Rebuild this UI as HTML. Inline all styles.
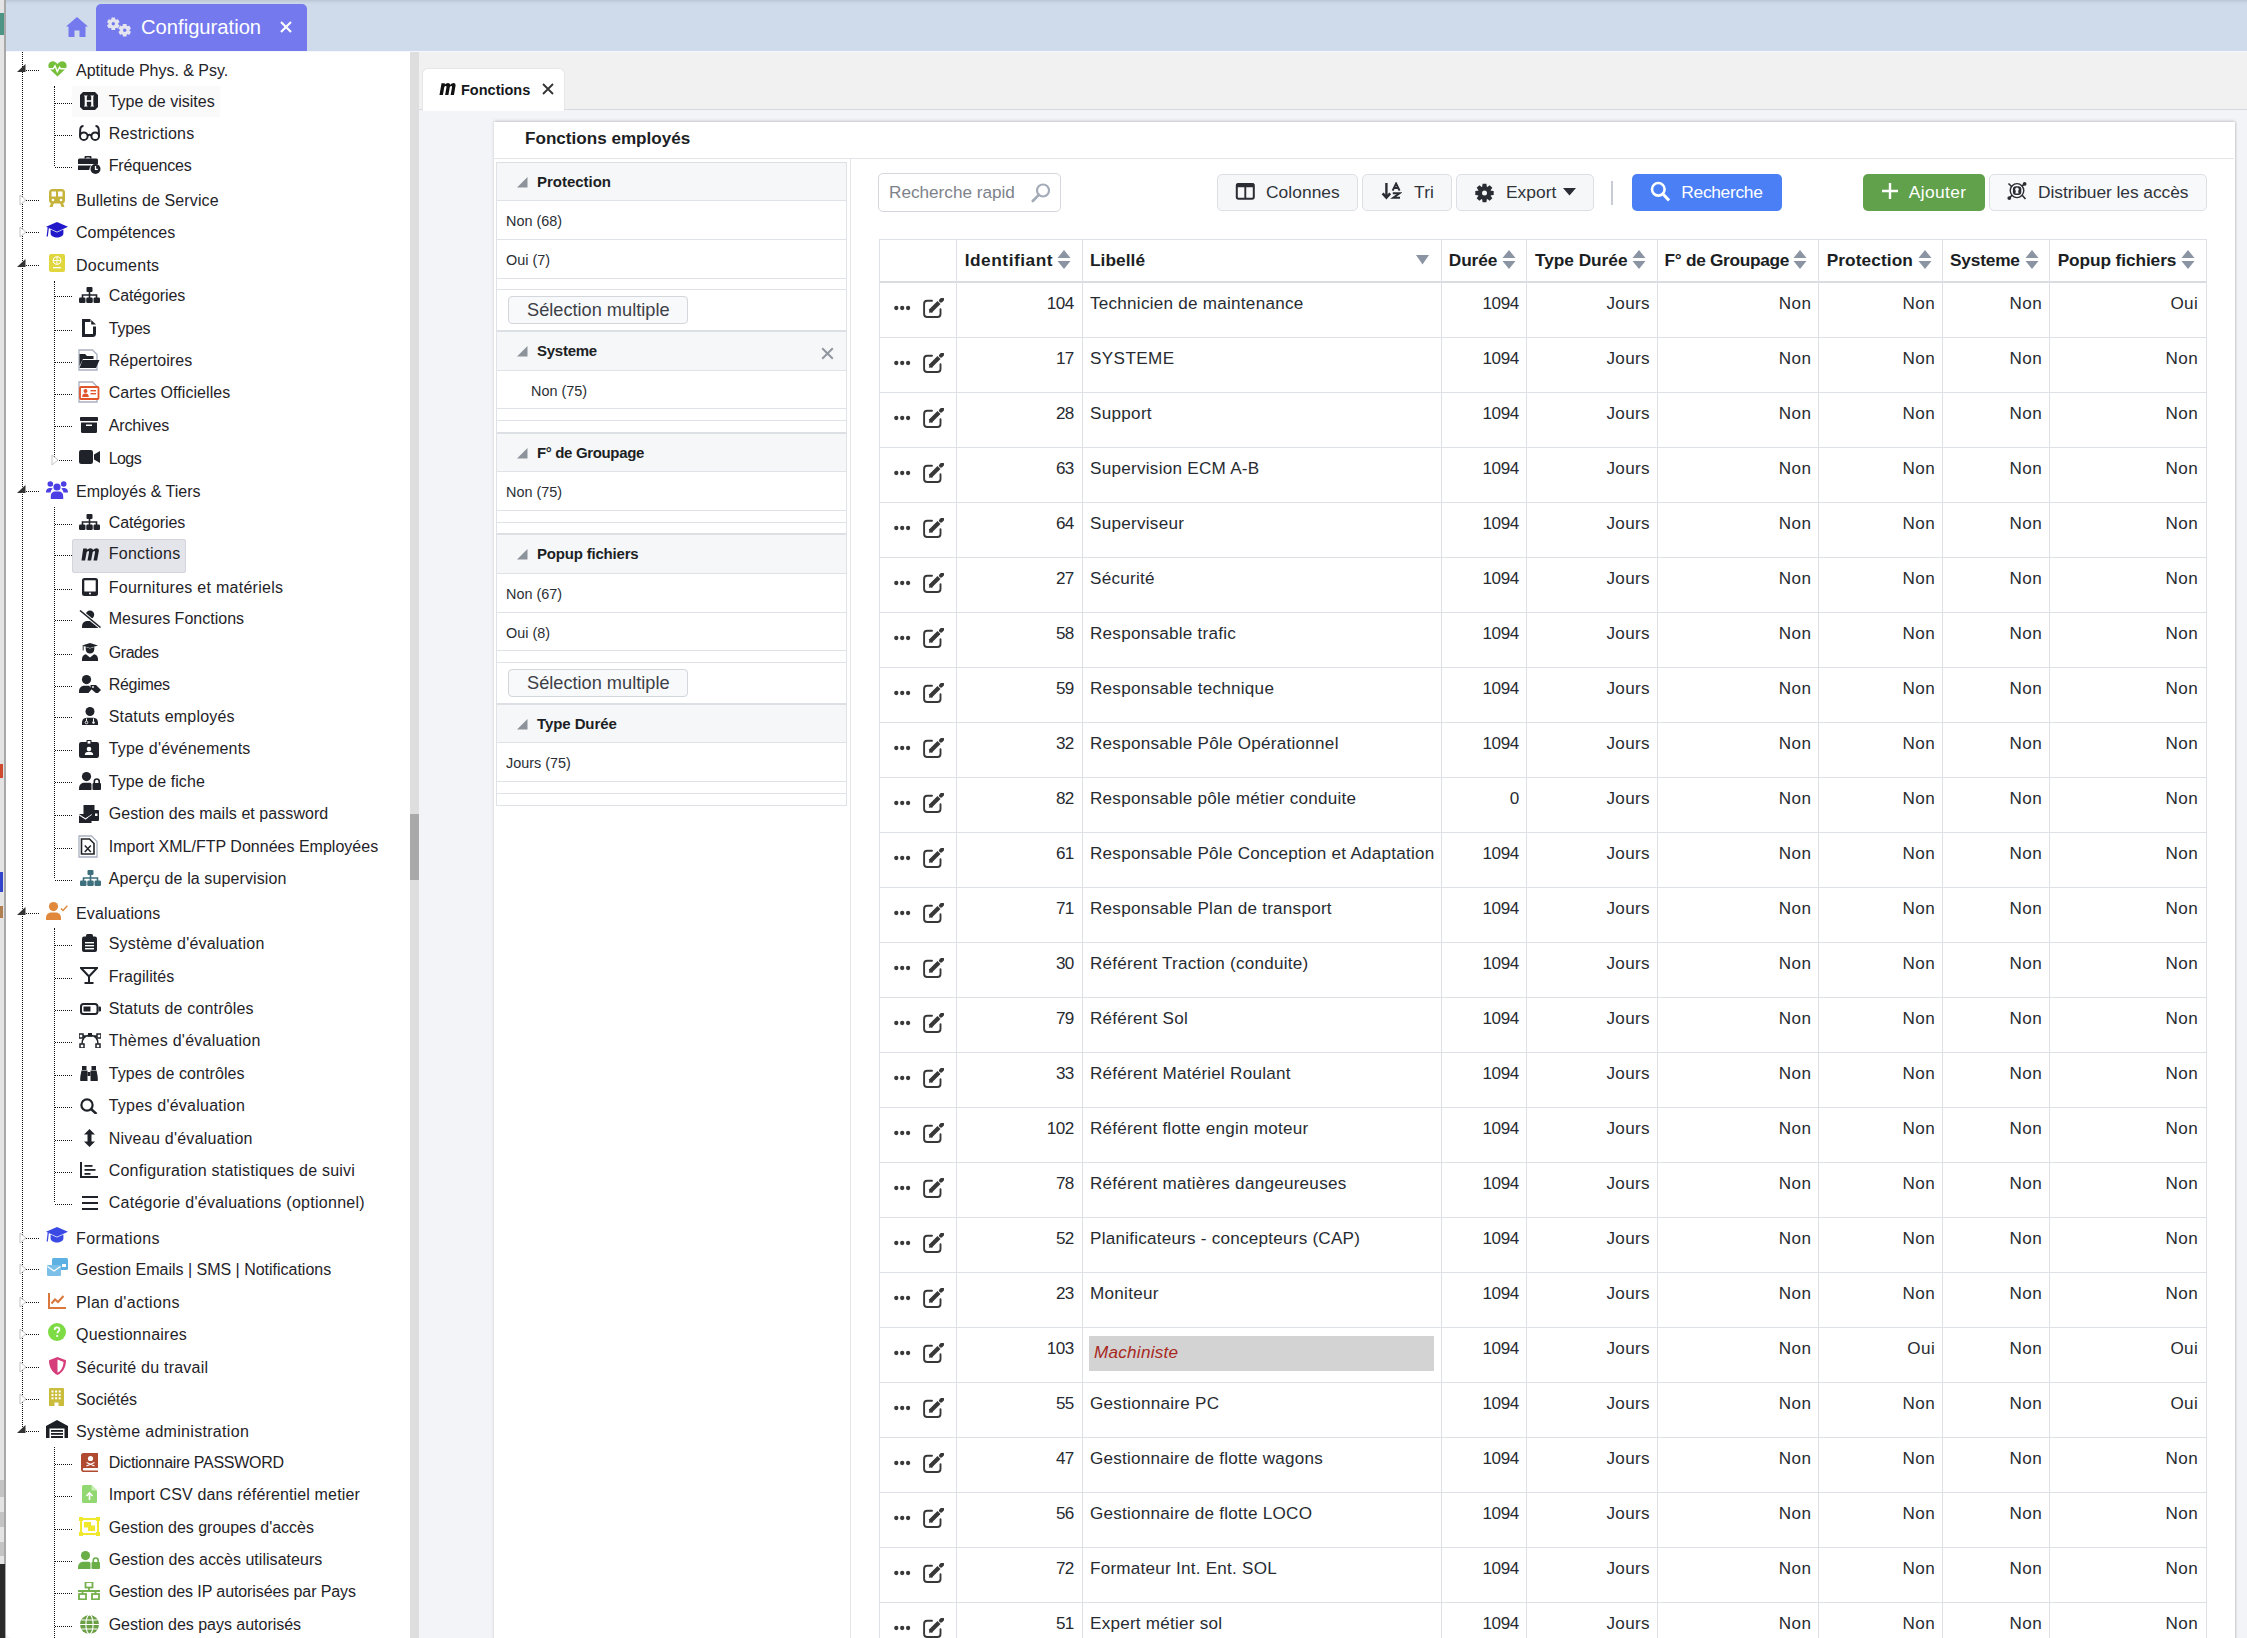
<!DOCTYPE html>
<html><head><meta charset="utf-8"><title>Fonctions</title>
<style>
html,body{margin:0;padding:0;}
body{width:2247px;height:1638px;overflow:hidden;position:relative;background:#f3f4f8;font-family:"Liberation Sans",sans-serif;}
.t{position:absolute;white-space:nowrap;}
.b{position:absolute;}
</style></head><body>
<div class="b" style="left:0px;top:0px;width:4px;height:1638px;background:#e4e4e4;"></div><div class="b" style="left:4px;top:0px;width:2px;height:1638px;background:#a8a8a8;"></div><div class="b" style="left:0px;top:13px;width:4px;height:22px;background:#4e9585;"></div><div class="b" style="left:0px;top:760px;width:4px;height:20px;background:#e0e0e0;"></div><div class="b" style="left:0px;top:1480px;width:4px;height:17px;background:#c4c4c4;"></div><div class="b" style="left:0px;top:1512px;width:4px;height:15px;background:#c4c4c4;"></div><div class="b" style="left:0px;top:1542px;width:4px;height:14px;background:#c4c4c4;"></div><div class="b" style="left:0px;top:1564px;width:5px;height:74px;background:#2a2a2a;"></div><div class="b" style="left:0px;top:764px;width:3px;height:14px;background:#d04a30;"></div><div class="b" style="left:0px;top:872px;width:3px;height:20px;background:#3344cc;"></div><div class="b" style="left:0px;top:906px;width:3px;height:12px;background:#b08050;"></div><div class="b" style="left:6px;top:0px;width:2241px;height:51px;background:linear-gradient(#bcc7d6 0px,#cbd7e6 3px,#cfdbea 5px,#cfdbea 100%);"></div><div class="b" style="left:6px;top:51px;width:2241px;height:1px;background:#f4f7fb;"></div><svg class="b" style="left:66px;top:17px;" width="22" height="20" viewBox="0 0 22 20"><path d="M11 0 L22 9.5 L19.5 9.5 L19.5 20 L13.5 20 L13.5 13.5 L8.5 13.5 L8.5 20 L2.5 20 L2.5 9.5 L0 9.5 Z" fill="#7479ee"/></svg><div class="b" style="left:96px;top:4px;width:211px;height:47px;background:#7479ee;border-radius:5px 5px 0 0;"></div><svg class="b" style="left:104px;top:15px;" width="30" height="26" viewBox="0 0 30 26"><g transform="translate(9.3,8.8)"><rect x="-1.9" y="-6.300000000000001" width="3.8" height="12.600000000000001" rx="0.6" transform="rotate(0)" fill="#e4e4ef"/><rect x="-1.9" y="-6.300000000000001" width="3.8" height="12.600000000000001" rx="0.6" transform="rotate(60)" fill="#e4e4ef"/><rect x="-1.9" y="-6.300000000000001" width="3.8" height="12.600000000000001" rx="0.6" transform="rotate(120)" fill="#e4e4ef"/><circle r="4.9" fill="#e4e4ef"/><circle r="1.7" fill="#7479ee"/></g><g transform="translate(20.7,15.2)"><rect x="-1.9" y="-6.300000000000001" width="3.8" height="12.600000000000001" rx="0.6" transform="rotate(0)" fill="#e4e4ef"/><rect x="-1.9" y="-6.300000000000001" width="3.8" height="12.600000000000001" rx="0.6" transform="rotate(60)" fill="#e4e4ef"/><rect x="-1.9" y="-6.300000000000001" width="3.8" height="12.600000000000001" rx="0.6" transform="rotate(120)" fill="#e4e4ef"/><circle r="4.9" fill="#e4e4ef"/><circle r="1.7" fill="#7479ee"/></g></svg><div class="t" style="top:16.22px;font-size:20.2px;line-height:22.563px;color:#ffffff;left:141px;">Configuration</div><svg class="b" style="left:280px;top:21px;" width="12" height="12" viewBox="0 0 12 12"><path d="M1 1 L11 11 M11 1 L1 11" stroke="#fff" stroke-width="2.2"/></svg><div class="b" style="left:6px;top:52px;width:404px;height:1586px;background:#ffffff;border-bottom-left-radius:6px;"></div><div class="b" style="left:410px;top:52px;width:9px;height:1586px;background:#dedede;"></div><div class="b" style="left:410px;top:814px;width:9px;height:66px;background:#a9a9a9;"></div><div class="b" style="left:419px;top:52px;width:1828px;height:57px;background:#f1f1f1;"></div><div class="b" style="left:419px;top:109px;width:1828px;height:1px;background:#d9dadf;"></div><div class="b" style="left:423px;top:69px;width:141px;height:41px;background:#ffffff;border-radius:5px 5px 0 0;box-shadow:0 0 0 1px #e6e6e8;"></div><div class="b" style="left:423px;top:109px;width:141px;height:2px;background:#ffffff;"></div><svg class="b" style="left:438.5px;top:83px;" width="17" height="12" viewBox="0 0 17 12"><path d="M2.6 0.3 H6.1 L5.9 1.6 Q7.5 0 9.3 0 Q11.2 0 11.6 1.7 Q13.3 0 15 0 Q17.6 0 17 3 L15.4 12 H12 L13.4 4.3 Q13.7 2.9 12.6 2.9 Q11.6 2.9 11.1 4.3 L9.7 12 H6.3 L7.7 4.3 Q8 2.9 6.9 2.9 Q5.9 2.9 5.4 4.3 L4 12 H0.5 Z" fill="#111" transform="scale(0.97,1)"/></svg><div class="t" style="top:81.88px;font-size:14.5px;line-height:16.197px;color:#15181c;font-weight:700;left:461px;">Fonctions</div><svg class="b" style="left:542px;top:83px;" width="12" height="12" viewBox="0 0 12 12"><path d="M1 1 L11 11 M11 1 L1 11" stroke="#333" stroke-width="1.8"/></svg><div class="b" style="left:494px;top:122px;width:1741px;height:1600px;background:#ffffff;box-shadow:0 -1px 3px rgba(0,0,0,0.16), 1px 0 2px rgba(0,0,0,0.10);"></div><div class="t" style="top:128.52px;font-size:17.1px;line-height:19.101px;color:#1b1e23;font-weight:700;left:525px;">Fonctions employés</div><div class="b" style="left:494px;top:158px;width:1740px;height:1px;background:#e3e5e9;"></div><div class="b" style="left:850px;top:159px;width:1px;height:1480px;background:#e3e5e9;"></div><div class="b" style="left:72px;top:538.5px;width:112px;height:32px;background:#e3e5ea;border:1px solid #d2d5db;border-radius:2px;"></div><div class="b" style="left:72px;top:86px;width:148px;height:31px;background:#fafafa;"></div><div class="b" style="left:22px;top:52px;width:0px;height:1379px;border-left:1px dotted #111;"></div><div class="b" style="left:54px;top:86px;width:0px;height:80px;border-left:1px dotted #111;"></div><div class="b" style="left:54px;top:281px;width:0px;height:178px;border-left:1px dotted #111;"></div><div class="b" style="left:54px;top:507px;width:0px;height:371px;border-left:1px dotted #111;"></div><div class="b" style="left:54px;top:928px;width:0px;height:274px;border-left:1px dotted #111;"></div><div class="b" style="left:54px;top:1447px;width:0px;height:191px;border-left:1px dotted #111;"></div><div class="b" style="left:26px;top:70px;width:13px;height:0px;border-top:1px dotted #111;"></div><svg class="b" style="left:17px;top:64px;" width="9" height="8" viewBox="0 0 9 8"><path d="M8.5 0 V8 H0 Z" fill="#333"/></svg><svg class="b" style="left:47.8px;top:60.5px;" width="19" height="16" viewBox="0 0 19 16"><path d="M9.5 15.5 L1.6 7.9 C-0.8 5.4 0.4 0.3 4.6 0.3 C6.9 0.3 8.5 1.7 9.5 3.2 C10.5 1.7 12.1 0.3 14.4 0.3 C18.6 0.3 19.8 5.4 17.4 7.9 Z" fill="#76bf3a"/><path d="M0 7.8 H5.2 L7 4.9 L9.3 10.6 L11.6 6.3 L12.9 7.8 H19" stroke="#fff" stroke-width="1.4" fill="none"/></svg><div class="t" style="top:62.12px;font-size:16px;line-height:17.872px;color:#1f2328;letter-spacing:-0.023px;left:76px;">Aptitude Phys. &amp; Psy.</div><div class="b" style="left:55px;top:103px;width:17px;height:0px;border-top:1px dotted #111;"></div><svg class="b" style="left:80.3px;top:92px;" width="18" height="18" viewBox="0 0 18 18"><path d="M3 0 H15 L18 3 V15 L15 18 H3 L0 15 V3 Z" fill="#1f2329"/><path d="M4 3.5 H7.5 V4.3 H6.8 V8.2 H11.2 V4.3 H10.5 V3.5 H14 V4.3 H13.3 V13.7 H14 V14.5 H10.5 V13.7 H11.2 V9.8 H6.8 V13.7 H7.5 V14.5 H4 V13.7 H4.7 V4.3 H4 Z" fill="#fff"/></svg><div class="t" style="top:93.22px;font-size:16px;line-height:17.872px;color:#1f2328;letter-spacing:0.012px;left:108.7px;">Type de visites</div><div class="b" style="left:55px;top:135px;width:17px;height:0px;border-top:1px dotted #111;"></div><svg class="b" style="left:79px;top:125px;" width="21" height="16" viewBox="0 0 21 16"><circle cx="4.8" cy="11.2" r="3.8" fill="none" stroke="#1f2329" stroke-width="2"/><circle cx="16.2" cy="11.2" r="3.8" fill="none" stroke="#1f2329" stroke-width="2"/><path d="M1 11 L1.2 5 C1.3 2.5 2.5 1 4.5 1 M20 11 L19.8 5 C19.7 2.5 18.5 1 16.5 1 M8.6 10.5 Q10.5 9 12.4 10.5" stroke="#1f2329" stroke-width="2" fill="none"/></svg><div class="t" style="top:124.82px;font-size:16px;line-height:17.872px;color:#1f2328;letter-spacing:0.175px;left:108.7px;">Restrictions</div><div class="b" style="left:55px;top:167px;width:17px;height:0px;border-top:1px dotted #111;"></div><svg class="b" style="left:78px;top:156px;" width="23" height="18" viewBox="0 0 23 18"><path d="M6.5 2.5 V1 Q6.5 0 7.5 0 H12.5 Q13.5 0 13.5 1 V2.5 H11.8 V1.6 H8.2 V2.5 Z" fill="#1f2329"/><path d="M0 4 Q0 2.5 1.5 2.5 H18.5 Q20 2.5 20 4 V8 H0 Z M0 9.5 H13 Q11.5 11 11.2 14 H0 Z" fill="#1f2329"/><circle cx="17.5" cy="13" r="5" fill="#1f2329"/><path d="M17.5 10 V13.3 H19.8" stroke="#fff" stroke-width="1.3" fill="none"/></svg><div class="t" style="top:157.22px;font-size:16px;line-height:17.872px;color:#1f2328;letter-spacing:-0.155px;left:108.7px;">Fréquences</div><div class="b" style="left:26px;top:200px;width:13px;height:0px;border-top:1px dotted #111;"></div><svg class="b" style="left:18.5px;top:194px;" width="8" height="12" viewBox="0 0 8 12"><path d="M1 1 L7 6 L1 11 Z" fill="#fff" stroke="#c4c4c4" stroke-width="1"/></svg><svg class="b" style="left:49px;top:189px;" width="16" height="18" viewBox="0 0 16 18"><rect x="0" y="0" width="16" height="14.5" rx="3.5" fill="#c6b33c"/><rect x="2.5" y="2.5" width="4.5" height="5" fill="#fff"/><rect x="9" y="2.5" width="4.5" height="5" fill="#fff"/><circle cx="4" cy="11" r="1.3" fill="#fff"/><circle cx="12" cy="11" r="1.3" fill="#fff"/><path d="M2 14 L0.5 18 H3.5 L5 14 Z M14 14 L15.5 18 H12.5 L11 14 Z" fill="#c6b33c"/></svg><div class="t" style="top:191.82px;font-size:16px;line-height:17.872px;color:#1f2328;letter-spacing:0.109px;left:76px;">Bulletins de Service</div><div class="b" style="left:26px;top:232px;width:13px;height:0px;border-top:1px dotted #111;"></div><svg class="b" style="left:18.5px;top:226px;" width="8" height="12" viewBox="0 0 8 12"><path d="M1 1 L7 6 L1 11 Z" fill="#fff" stroke="#c4c4c4" stroke-width="1"/></svg><svg class="b" style="left:46px;top:222px;" width="22" height="16" viewBox="0 0 22 16"><path d="M11 0 L22 4.8 L11 9.8 L0 4.8 Z" fill="#2119c9"/><path d="M4.6 7.6 V11.6 C4.6 14 8 15.6 11 15.6 C14 15.6 17.4 14 17.4 11.6 V7.6 L11 10.6 Z" fill="#2119c9"/><path d="M2.3 5.5 L1.2 14.5" stroke="#2119c9" stroke-width="1.3"/></svg><div class="t" style="top:223.92px;font-size:16px;line-height:17.872px;color:#1f2328;letter-spacing:0.058px;left:76px;">Compétences</div><div class="b" style="left:26px;top:265px;width:13px;height:0px;border-top:1px dotted #111;"></div><svg class="b" style="left:17px;top:259px;" width="9" height="8" viewBox="0 0 9 8"><path d="M8.5 0 V8 H0 Z" fill="#333"/></svg><svg class="b" style="left:49px;top:254px;" width="16" height="18" viewBox="0 0 16 18"><rect x="0" y="0" width="16" height="18" rx="2" fill="#e0d63e"/><circle cx="8" cy="6.5" r="3.8" fill="none" stroke="#fff" stroke-width="1.1"/><path d="M4.2 6.5 H11.8 M8 2.7 V10.3" stroke="#fff" stroke-width="0.9"/><rect x="4" y="13" width="8" height="1.3" fill="#fff"/></svg><div class="t" style="top:256.92px;font-size:16px;line-height:17.872px;color:#1f2328;letter-spacing:0.272px;left:76px;">Documents</div><div class="b" style="left:55px;top:296px;width:17px;height:0px;border-top:1px dotted #111;"></div><svg class="b" style="left:79px;top:287px;" width="21" height="16" viewBox="0 0 21 16"><rect x="7.5" y="0" width="6" height="5" rx="1" fill="#1f2329"/><path d="M10.5 5 V8 M3.5 11 V8 H17.5 V11 M10.5 8 V11" stroke="#1f2329" stroke-width="1.6" fill="none"/><rect x="0" y="10.5" width="6.5" height="5.5" rx="1.2" fill="#1f2329"/><rect x="7.25" y="10.5" width="6.5" height="5.5" rx="1.2" fill="#1f2329"/><rect x="14.5" y="10.5" width="6.5" height="5.5" rx="1.2" fill="#1f2329"/></svg><div class="t" style="top:286.62px;font-size:16px;line-height:17.872px;color:#1f2328;letter-spacing:-0.097px;left:108.7px;">Catégories</div><div class="b" style="left:55px;top:330px;width:17px;height:0px;border-top:1px dotted #111;"></div><svg class="b" style="left:82px;top:319px;" width="15" height="18" viewBox="0 0 15 18"><path d="M0 0 H8.5 V3 H3 V15 H10.5 Q11 15 11 14.5 V7.5 H14 V14.5 Q14 18 10.5 18 H0 Z" fill="#1f2329"/><path d="M9.2 1 V5.6 H14 Z" fill="#1f2329"/></svg><div class="t" style="top:319.72px;font-size:16px;line-height:17.872px;color:#1f2328;letter-spacing:-0.197px;left:108.7px;">Types</div><div class="b" style="left:55px;top:362px;width:17px;height:0px;border-top:1px dotted #111;"></div><svg class="b" style="left:78px;top:349px;" width="22" height="22" viewBox="0 0 22 22"><path d="M1 1 H14.5 L19 5.5 V21 H1 Z" fill="#fff" stroke="#aab0c0" stroke-width="1.3"/><path d="M1.5 5 H7 L9 7 H15.5 V10 H5 L1.5 17 Z" fill="#1f2329"/><path d="M4.5 11 H21.5 L18 19 H1.5 Z" fill="#1f2329"/></svg><div class="t" style="top:352.12px;font-size:16px;line-height:17.872px;color:#1f2328;letter-spacing:0.079px;left:108.7px;">Répertoires</div><div class="b" style="left:55px;top:394px;width:17px;height:0px;border-top:1px dotted #111;"></div><svg class="b" style="left:78px;top:381px;" width="22" height="22" viewBox="0 0 22 22"><path d="M1 1 H14.5 L19 5.5 V21 H1 Z" fill="#fff" stroke="#aab0c0" stroke-width="1.3"/><rect x="2" y="6" width="18.5" height="12" rx="1" fill="#fff" stroke="#e0552a" stroke-width="1.8"/><circle cx="7.5" cy="10" r="2" fill="#e0552a"/><path d="M4.2 16 Q4.2 12.6 7.5 12.6 Q10.8 12.6 10.8 16 Z" fill="#e0552a"/><rect x="12.5" y="9" width="5.5" height="1.4" fill="#e0552a"/><rect x="12.5" y="12" width="5.5" height="1.4" fill="#e0552a"/></svg><div class="t" style="top:384.12px;font-size:16px;line-height:17.872px;color:#1f2328;letter-spacing:0.051px;left:108.7px;">Cartes Officielles</div><div class="b" style="left:55px;top:426px;width:17px;height:0px;border-top:1px dotted #111;"></div><svg class="b" style="left:80px;top:417px;" width="18" height="16" viewBox="0 0 18 16"><rect x="0" y="0" width="18" height="4" rx="0.8" fill="#1f2329"/><path d="M1 5.5 H17 V14.5 Q17 16 15.5 16 H2.5 Q1 16 1 14.5 Z" fill="#1f2329"/><rect x="6" y="7.5" width="6" height="1.5" fill="#fff"/></svg><div class="t" style="top:416.62px;font-size:16px;line-height:17.872px;color:#1f2328;letter-spacing:-0.122px;left:108.7px;">Archives</div><div class="b" style="left:55px;top:460px;width:17px;height:0px;border-top:1px dotted #111;"></div><svg class="b" style="left:51px;top:454px;" width="8" height="12" viewBox="0 0 8 12"><path d="M1 1 L7 6 L1 11 Z" fill="#fff" stroke="#c4c4c4" stroke-width="1"/></svg><svg class="b" style="left:79px;top:450px;" width="21" height="14" viewBox="0 0 21 14"><rect x="0" y="0" width="14" height="14" rx="2.2" fill="#1f2329"/><path d="M15 4.5 L21 1 V13 L15 9.5 Z" fill="#1f2329"/></svg><div class="t" style="top:450.22px;font-size:16px;line-height:17.872px;color:#1f2328;letter-spacing:-0.565px;left:108.7px;">Logs</div><div class="b" style="left:26px;top:491px;width:13px;height:0px;border-top:1px dotted #111;"></div><svg class="b" style="left:17px;top:485px;" width="9" height="8" viewBox="0 0 9 8"><path d="M8.5 0 V8 H0 Z" fill="#333"/></svg><svg class="b" style="left:46px;top:480px;" width="22" height="19" viewBox="0 0 22 19"><circle cx="4.3" cy="4" r="2.8" fill="#4a3ee4"/><circle cx="17.7" cy="4" r="2.8" fill="#4a3ee4"/><circle cx="11" cy="7" r="3.6" fill="#4a3ee4"/><path d="M0 12.5 C0 9 2 8 4.3 8 C5.5 8 6.3 8.4 6.8 8.8 C5.3 9.8 4.6 11 4.6 12.5 Z M22 12.5 C22 9 20 8 17.7 8 C16.5 8 15.7 8.4 15.2 8.8 C16.7 9.8 17.4 11 17.4 12.5 Z" fill="#4a3ee4"/><path d="M4.8 19 V16 C4.8 13 6.8 11.5 9 11.5 H13 C15.2 11.5 17.2 13 17.2 16 V19 Z" fill="#4a3ee4"/></svg><div class="t" style="top:483.32px;font-size:16px;line-height:17.872px;color:#1f2328;letter-spacing:0.001px;left:76px;">Employés &amp; Tiers</div><div class="b" style="left:55px;top:524px;width:17px;height:0px;border-top:1px dotted #111;"></div><svg class="b" style="left:79px;top:514px;" width="21" height="16" viewBox="0 0 21 16"><rect x="7.5" y="0" width="6" height="5" rx="1" fill="#1f2329"/><path d="M10.5 5 V8 M3.5 11 V8 H17.5 V11 M10.5 8 V11" stroke="#1f2329" stroke-width="1.6" fill="none"/><rect x="0" y="10.5" width="6.5" height="5.5" rx="1.2" fill="#1f2329"/><rect x="7.25" y="10.5" width="6.5" height="5.5" rx="1.2" fill="#1f2329"/><rect x="14.5" y="10.5" width="6.5" height="5.5" rx="1.2" fill="#1f2329"/></svg><div class="t" style="top:513.92px;font-size:16px;line-height:17.872px;color:#1f2328;letter-spacing:-0.097px;left:108.7px;">Catégories</div><div class="b" style="left:55px;top:555px;width:17px;height:0px;border-top:1px dotted #111;"></div><svg class="b" style="left:80.5px;top:548px;" width="18" height="13" viewBox="0 0 18 13"><path d="M2.2 0.5 H6 L5.8 1.8 Q7.6 0.2 9.6 0.2 Q11.6 0.2 12 2 Q13.8 0.2 15.6 0.2 Q18.4 0.2 17.8 3.3 L16.1 12.5 H12.5 L14 4.5 Q14.3 3 13.2 3 Q12.1 3 11.6 4.5 L10.1 12.5 H6.5 L8 4.5 Q8.3 3 7.2 3 Q6.1 3 5.6 4.5 L4.1 12.5 H0.5 Z" fill="#1f2329"/></svg><div class="t" style="top:545.32px;font-size:16px;line-height:17.872px;color:#1f2328;letter-spacing:0.266px;left:108.7px;">Fonctions</div><div class="b" style="left:55px;top:589px;width:17px;height:0px;border-top:1px dotted #111;"></div><svg class="b" style="left:81.6px;top:578px;" width="16" height="18" viewBox="0 0 16 18"><rect x="0" y="0" width="16" height="18" rx="2.5" fill="#1f2329"/><rect x="2.3" y="2.3" width="11.4" height="11.2" fill="#fff"/><circle cx="8" cy="15.6" r="1" fill="#fff"/></svg><div class="t" style="top:579.42px;font-size:16px;line-height:17.872px;color:#1f2328;letter-spacing:0.271px;left:108.7px;">Fournitures et matériels</div><div class="b" style="left:55px;top:620px;width:17px;height:0px;border-top:1px dotted #111;"></div><svg class="b" style="left:78.6px;top:610px;" width="22" height="18" viewBox="0 0 22 18"><circle cx="11" cy="4.8" r="4.2" fill="#1f2329"/><path d="M3 18 V16.5 C3 12.5 5.8 11 8.5 11 H13.5 C16.2 11 19 12.5 19 16.5 V18 Z" fill="#1f2329"/><path d="M1 0.5 L21.5 17.5" stroke="#fff" stroke-width="3.4"/><path d="M1 0.5 L21.5 17.5" stroke="#1f2329" stroke-width="1.5"/></svg><div class="t" style="top:610.42px;font-size:16px;line-height:17.872px;color:#1f2328;letter-spacing:0.015px;left:108.7px;">Mesures Fonctions</div><div class="b" style="left:55px;top:654px;width:17px;height:0px;border-top:1px dotted #111;"></div><svg class="b" style="left:81.6px;top:642.5px;" width="16" height="18" viewBox="0 0 16 18"><path d="M0 2.5 L8 0 L16 2.5 L8 5 Z" fill="#1f2329"/><path d="M3.7 4 V6 C3.7 9 5.6 10.6 8 10.6 C10.4 10.6 12.3 9 12.3 6 V4 L8 5.5 Z" fill="#1f2329"/><path d="M0 18 V16 C0 13.3 1.6 11.7 4 11.2 L8 14.6 L12 11.2 C14.4 11.7 16 13.3 16 16 V18 Z" fill="#1f2329"/><path d="M1.2 3 V7.5" stroke="#1f2329" stroke-width="0.9"/></svg><div class="t" style="top:643.62px;font-size:16px;line-height:17.872px;color:#1f2328;letter-spacing:-0.414px;left:108.7px;">Grades</div><div class="b" style="left:55px;top:686px;width:17px;height:0px;border-top:1px dotted #111;"></div><svg class="b" style="left:78.6px;top:675px;" width="22" height="18" viewBox="0 0 22 18"><circle cx="7.5" cy="4.6" r="4.6" fill="#1f2329"/><path d="M0 18 V16.5 C0 12.5 2.8 10.8 5.5 10.8 H10 L13 13.8 L9.5 18 Z" fill="#1f2329"/><path d="M11.5 10 H17 L22 15 L18 19 L11.5 13.5 Z" fill="#1f2329"/><circle cx="14" cy="12" r="0.9" fill="#fff"/></svg><div class="t" style="top:675.92px;font-size:16px;line-height:17.872px;color:#1f2328;letter-spacing:-0.289px;left:108.7px;">Régimes</div><div class="b" style="left:55px;top:717px;width:17px;height:0px;border-top:1px dotted #111;"></div><svg class="b" style="left:81.6px;top:707px;" width="16" height="18" viewBox="0 0 16 18"><circle cx="8" cy="4.5" r="4.5" fill="#1f2329"/><path d="M0 18 V16 C0 12.5 2 11 4.5 10.8 H11.5 C14 11 16 12.5 16 16 V18 Z" fill="#1f2329"/><path d="M4.5 11.5 V13.8 M11.5 11.5 V14.5" stroke="#fff" stroke-width="1"/><circle cx="4.5" cy="15.5" r="1.3" fill="none" stroke="#fff" stroke-width="0.9"/><circle cx="11.5" cy="15.5" r="1.2" fill="#fff"/></svg><div class="t" style="top:707.52px;font-size:16px;line-height:17.872px;color:#1f2328;letter-spacing:0.211px;left:108.7px;">Statuts employés</div><div class="b" style="left:55px;top:750px;width:17px;height:0px;border-top:1px dotted #111;"></div><svg class="b" style="left:79.2px;top:740px;" width="20" height="18" viewBox="0 0 20 18"><rect x="0" y="2" width="20" height="16" rx="2.2" fill="#1f2329"/><rect x="7.5" y="0" width="5" height="4.5" rx="0.8" fill="#1f2329"/><rect x="8.6" y="1" width="2.8" height="2.6" fill="#fff"/><circle cx="10" cy="9" r="2.3" fill="#fff"/><path d="M5.8 15 Q5.8 11.8 10 11.8 Q14.2 11.8 14.2 15 Z" fill="#fff"/></svg><div class="t" style="top:740.32px;font-size:16px;line-height:17.872px;color:#1f2328;letter-spacing:0.209px;left:108.7px;">Type d&#x27;événements</div><div class="b" style="left:55px;top:782px;width:17px;height:0px;border-top:1px dotted #111;"></div><svg class="b" style="left:78.6px;top:772px;" width="22" height="18" viewBox="0 0 22 18"><circle cx="7.5" cy="4.6" r="4.6" fill="#1f2329"/><path d="M0 18 V16.5 C0 12.5 2.8 10.8 5.5 10.8 H11 Q12.5 11 12.5 12.5 V18 Z" fill="#1f2329"/><rect x="13.5" y="11" width="8.5" height="7" rx="1" fill="#1f2329"/><path d="M15.3 11.5 V9.5 Q15.3 7 17.75 7 Q20.2 7 20.2 9.5 V11.5" stroke="#1f2329" stroke-width="1.6" fill="none"/></svg><div class="t" style="top:772.62px;font-size:16px;line-height:17.872px;color:#1f2328;letter-spacing:0.077px;left:108.7px;">Type de fiche</div><div class="b" style="left:55px;top:815px;width:17px;height:0px;border-top:1px dotted #111;"></div><svg class="b" style="left:79.2px;top:805px;" width="20" height="18" viewBox="0 0 20 18"><rect x="4.5" y="0" width="11" height="9" fill="#1f2329"/><rect x="9" y="5" width="11" height="11" rx="1" fill="#1f2329"/><rect x="16" y="8.5" width="2.5" height="2.5" fill="#fff"/><path d="M0 10.5 L6.5 14.5 L12.5 10.5 V18 H0 Z" fill="#1f2329"/><path d="M0 9 H12.5 V10 L6.5 13.5 L0 10 Z" fill="#1f2329"/><path d="M0 9.5 L6.5 13.8 L12.8 9.5" stroke="#fff" stroke-width="0.9" fill="none"/></svg><div class="t" style="top:805.42px;font-size:16px;line-height:17.872px;color:#1f2328;letter-spacing:0.061px;left:108.7px;">Gestion des mails et password</div><div class="b" style="left:55px;top:848px;width:17px;height:0px;border-top:1px dotted #111;"></div><svg class="b" style="left:78.2px;top:835px;" width="20" height="23" viewBox="0 0 20 23"><path d="M1 1 H13.5 L19 6.5 V22 H1 Z" fill="#fff" stroke="#aab0c0" stroke-width="1.3"/><path d="M3.5 4 H11.5 L16 8.5 V19 H3.5 Z" fill="none" stroke="#1f2329" stroke-width="1.6"/><path d="M6.8 10.5 L12.8 17 M12.8 10.5 L6.8 17" stroke="#1f2329" stroke-width="1.5"/></svg><div class="t" style="top:837.62px;font-size:16px;line-height:17.872px;color:#1f2328;letter-spacing:0.011px;left:108.7px;">Import XML/FTP Données Employées</div><div class="b" style="left:55px;top:880px;width:17px;height:0px;border-top:1px dotted #111;"></div><svg class="b" style="left:79.5px;top:870px;" width="21" height="16" viewBox="0 0 21 16"><rect x="7.5" y="0" width="6" height="5" rx="1" fill="#3d6f7c"/><path d="M10.5 5 V8 M3.5 11 V8 H17.5 V11 M10.5 8 V11" stroke="#3d6f7c" stroke-width="1.6" fill="none"/><rect x="0" y="10.5" width="6.5" height="5.5" rx="1.2" fill="#3d6f7c"/><rect x="7.25" y="10.5" width="6.5" height="5.5" rx="1.2" fill="#3d6f7c"/><rect x="14.5" y="10.5" width="6.5" height="5.5" rx="1.2" fill="#3d6f7c"/></svg><div class="t" style="top:869.92px;font-size:16px;line-height:17.872px;color:#1f2328;letter-spacing:0.108px;left:108.7px;">Aperçu de la supervision</div><div class="b" style="left:26px;top:913px;width:13px;height:0px;border-top:1px dotted #111;"></div><svg class="b" style="left:17px;top:907px;" width="9" height="8" viewBox="0 0 9 8"><path d="M8.5 0 V8 H0 Z" fill="#333"/></svg><svg class="b" style="left:46px;top:902px;" width="22" height="18" viewBox="0 0 22 18"><circle cx="7.5" cy="4.6" r="4.6" fill="#e0893c"/><path d="M0 18 V16 C0 12 2.8 10.5 5.5 10.5 H9.5 C12.2 10.5 15 12 15 16 V18 Z" fill="#e0893c"/><path d="M15 6.5 L17 8.5 L21.3 3.8" stroke="#e0893c" stroke-width="1.4" fill="none"/></svg><div class="t" style="top:904.82px;font-size:16px;line-height:17.872px;color:#1f2328;letter-spacing:0.148px;left:76px;">Evaluations</div><div class="b" style="left:55px;top:945px;width:17px;height:0px;border-top:1px dotted #111;"></div><svg class="b" style="left:82px;top:934.4px;" width="15" height="18" viewBox="0 0 15 18"><rect x="0" y="2.5" width="15" height="15.5" rx="2" fill="#1f2329"/><rect x="4" y="0" width="7" height="4" rx="1.5" fill="#1f2329"/><rect x="3" y="8" width="9" height="1.4" fill="#fff"/><rect x="3" y="11" width="9" height="1.4" fill="#fff"/><rect x="3" y="14" width="9" height="1.4" fill="#fff"/></svg><div class="t" style="top:934.82px;font-size:16px;line-height:17.872px;color:#1f2328;letter-spacing:0.211px;left:108.7px;">Système d&#x27;évaluation</div><div class="b" style="left:55px;top:978px;width:17px;height:0px;border-top:1px dotted #111;"></div><svg class="b" style="left:80.2px;top:967px;" width="18" height="17" viewBox="0 0 18 17"><path d="M1 1 H17 L9 9.5 Z" fill="none" stroke="#1f2329" stroke-width="2"/><path d="M9 9.5 V16 M4.5 16 H13.5" stroke="#1f2329" stroke-width="2"/></svg><div class="t" style="top:967.92px;font-size:16px;line-height:17.872px;color:#1f2328;letter-spacing:0.077px;left:108.7px;">Fragilités</div><div class="b" style="left:55px;top:1010px;width:17px;height:0px;border-top:1px dotted #111;"></div><svg class="b" style="left:79.5px;top:1002.8px;" width="21" height="12" viewBox="0 0 21 12"><rect x="1" y="1" width="16.5" height="10" rx="2.5" fill="none" stroke="#1f2329" stroke-width="2"/><rect x="3.5" y="3.5" width="7" height="5" fill="#1f2329"/><rect x="18.5" y="3.5" width="2.5" height="5" rx="1" fill="#1f2329"/></svg><div class="t" style="top:999.92px;font-size:16px;line-height:17.872px;color:#1f2328;letter-spacing:0.183px;left:108.7px;">Statuts de contrôles</div><div class="b" style="left:55px;top:1042px;width:17px;height:0px;border-top:1px dotted #111;"></div><svg class="b" style="left:78.6px;top:1032.7px;" width="22" height="15" viewBox="0 0 22 15"><rect x="0" y="1" width="4" height="4" fill="none" stroke="#1f2329" stroke-width="1.5"/><rect x="18" y="1" width="4" height="4" fill="none" stroke="#1f2329" stroke-width="1.5"/><rect x="9" y="0" width="4" height="3.5" fill="#1f2329"/><rect x="1" y="11" width="4" height="4" fill="none" stroke="#1f2329" stroke-width="1.5"/><rect x="17" y="11" width="4" height="4" fill="none" stroke="#1f2329" stroke-width="1.5"/><path d="M4 3 H18 M3 11 Q3 3 11 2 Q19 3 19 11" stroke="#1f2329" stroke-width="1.5" fill="none"/></svg><div class="t" style="top:1032.02px;font-size:16px;line-height:17.872px;color:#1f2328;letter-spacing:0.253px;left:108.7px;">Thèmes d&#x27;évaluation</div><div class="b" style="left:55px;top:1075px;width:17px;height:0px;border-top:1px dotted #111;"></div><svg class="b" style="left:80.2px;top:1065px;" width="18" height="16" viewBox="0 0 18 16"><path d="M2 1 H6.5 V5 H2 Z M11.5 1 H16 V5 H11.5 Z" fill="#1f2329"/><path d="M1.5 5.5 H7.5 V16 H0.3 Q0 14 0.4 11 Z M10.5 5.5 H16.5 L17.6 11 Q18 14 17.7 16 H10.5 Z" fill="#1f2329"/><rect x="7.5" y="7" width="3" height="4" fill="#1f2329"/></svg><div class="t" style="top:1065.02px;font-size:16px;line-height:17.872px;color:#1f2328;letter-spacing:0.094px;left:108.7px;">Types de contrôles</div><div class="b" style="left:55px;top:1107px;width:17px;height:0px;border-top:1px dotted #111;"></div><svg class="b" style="left:80.2px;top:1098px;" width="18" height="16" viewBox="0 0 18 16"><circle cx="7" cy="7" r="5.6" fill="none" stroke="#1f2329" stroke-width="2.2"/><path d="M11 11 L16.5 16" stroke="#1f2329" stroke-width="2.4"/></svg><div class="t" style="top:1097.02px;font-size:16px;line-height:17.872px;color:#1f2328;letter-spacing:0.239px;left:108.7px;">Types d&#x27;évaluation</div><div class="b" style="left:55px;top:1140px;width:17px;height:0px;border-top:1px dotted #111;"></div><svg class="b" style="left:84.2px;top:1129.3px;" width="11" height="18" viewBox="0 0 11 18"><path d="M5.5 0 L11 5.5 H7.5 V12.5 H11 L5.5 18 L0 12.5 H3.5 V5.5 H0 Z" fill="#1f2329"/></svg><div class="t" style="top:1129.82px;font-size:16px;line-height:17.872px;color:#1f2328;letter-spacing:0.258px;left:108.7px;">Niveau d&#x27;évaluation</div><div class="b" style="left:55px;top:1172px;width:17px;height:0px;border-top:1px dotted #111;"></div><svg class="b" style="left:80.2px;top:1162px;" width="18" height="16" viewBox="0 0 18 16"><path d="M1 0 V15 H18" stroke="#1f2329" stroke-width="2" fill="none"/><rect x="4.5" y="3" width="8" height="1.8" fill="#1f2329"/><rect x="4.5" y="7" width="11" height="1.8" fill="#1f2329"/><rect x="4.5" y="11" width="6" height="1.8" fill="#1f2329"/></svg><div class="t" style="top:1161.92px;font-size:16px;line-height:17.872px;color:#1f2328;letter-spacing:0.231px;left:108.7px;">Configuration statistiques de suivi</div><div class="b" style="left:55px;top:1204px;width:17px;height:0px;border-top:1px dotted #111;"></div><svg class="b" style="left:81.6px;top:1195.5px;" width="16" height="14" viewBox="0 0 16 14"><rect x="0" y="0" width="16" height="2" fill="#1f2329"/><rect x="0" y="6" width="16" height="2" fill="#1f2329"/><rect x="0" y="12" width="16" height="2" fill="#1f2329"/></svg><div class="t" style="top:1194.42px;font-size:16px;line-height:17.872px;color:#1f2328;letter-spacing:0.271px;left:108.7px;">Catégorie d&#x27;évaluations (optionnel)</div><div class="b" style="left:26px;top:1238px;width:13px;height:0px;border-top:1px dotted #111;"></div><svg class="b" style="left:18.5px;top:1232px;" width="8" height="12" viewBox="0 0 8 12"><path d="M1 1 L7 6 L1 11 Z" fill="#fff" stroke="#c4c4c4" stroke-width="1"/></svg><svg class="b" style="left:46px;top:1227px;" width="22" height="16" viewBox="0 0 22 16"><path d="M11 0 L22 4.8 L11 9.8 L0 4.8 Z" fill="#3a48e4"/><path d="M4.6 7.6 V11.6 C4.6 14 8 15.6 11 15.6 C14 15.6 17.4 14 17.4 11.6 V7.6 L11 10.6 Z" fill="#3a48e4"/><path d="M2.3 5.5 L1.2 14.5" stroke="#3a48e4" stroke-width="1.3"/></svg><div class="t" style="top:1229.52px;font-size:16px;line-height:17.872px;color:#1f2328;letter-spacing:0.386px;left:76px;">Formations</div><div class="b" style="left:26px;top:1269px;width:13px;height:0px;border-top:1px dotted #111;"></div><svg class="b" style="left:18.5px;top:1263px;" width="8" height="12" viewBox="0 0 8 12"><path d="M1 1 L7 6 L1 11 Z" fill="#fff" stroke="#c4c4c4" stroke-width="1"/></svg><svg class="b" style="left:47px;top:1258px;" width="21" height="18" viewBox="0 0 21 18"><rect x="5" y="0" width="16" height="12" rx="1.5" fill="#5db0e2"/><rect x="15" y="6" width="4" height="3" fill="#fff"/><rect x="0" y="7" width="14" height="11" rx="1.2" fill="#7cc0ea"/><path d="M0.5 8.5 L7 13 L13.5 8.5" stroke="#fff" stroke-width="1.2" fill="none"/></svg><div class="t" style="top:1260.92px;font-size:16px;line-height:17.872px;color:#1f2328;letter-spacing:-0.009px;left:76px;">Gestion Emails | SMS | Notifications</div><div class="b" style="left:26px;top:1302px;width:13px;height:0px;border-top:1px dotted #111;"></div><svg class="b" style="left:18.5px;top:1296px;" width="8" height="12" viewBox="0 0 8 12"><path d="M1 1 L7 6 L1 11 Z" fill="#fff" stroke="#c4c4c4" stroke-width="1"/></svg><svg class="b" style="left:48px;top:1292.7px;" width="18" height="16" viewBox="0 0 18 16"><path d="M1 0 V15 H18" stroke="#d9783a" stroke-width="2" fill="none"/><path d="M3.5 10.5 L7 6.5 L10 9 L15.5 3" stroke="#d9783a" stroke-width="2" fill="none"/></svg><div class="t" style="top:1294.02px;font-size:16px;line-height:17.872px;color:#1f2328;letter-spacing:0.329px;left:76px;">Plan d&#x27;actions</div><div class="b" style="left:26px;top:1334px;width:13px;height:0px;border-top:1px dotted #111;"></div><svg class="b" style="left:18.5px;top:1328px;" width="8" height="12" viewBox="0 0 8 12"><path d="M1 1 L7 6 L1 11 Z" fill="#fff" stroke="#c4c4c4" stroke-width="1"/></svg><svg class="b" style="left:48px;top:1323px;" width="18" height="18" viewBox="0 0 18 18"><circle cx="9" cy="9" r="9" fill="#7ddb44"/><path d="M6.6 7 C6.6 5.2 7.7 4.4 9 4.4 C10.4 4.4 11.4 5.3 11.4 6.6 C11.4 8.2 9.3 8.4 9.3 10.2" stroke="#fff" stroke-width="1.7" fill="none"/><circle cx="9.2" cy="13" r="1.1" fill="#fff"/></svg><div class="t" style="top:1326.02px;font-size:16px;line-height:17.872px;color:#1f2328;letter-spacing:0.245px;left:76px;">Questionnaires</div><div class="b" style="left:26px;top:1367px;width:13px;height:0px;border-top:1px dotted #111;"></div><svg class="b" style="left:18.5px;top:1361px;" width="8" height="12" viewBox="0 0 8 12"><path d="M1 1 L7 6 L1 11 Z" fill="#fff" stroke="#c4c4c4" stroke-width="1"/></svg><svg class="b" style="left:48.5px;top:1356.5px;" width="17" height="18" viewBox="0 0 17 18"><path d="M8.5 0 L17 3.3 C17 10 14 15.5 8.5 18 C3 15.5 0 10 0 3.3 Z" fill="#d63d7a"/><path d="M8.5 2.5 L14.5 4.9 C14.3 9.8 12.3 13.8 8.5 15.6 Z" fill="#fff"/></svg><div class="t" style="top:1359.02px;font-size:16px;line-height:17.872px;color:#1f2328;letter-spacing:0.219px;left:76px;">Sécurité du travail</div><div class="b" style="left:26px;top:1399px;width:13px;height:0px;border-top:1px dotted #111;"></div><svg class="b" style="left:18.5px;top:1393px;" width="8" height="12" viewBox="0 0 8 12"><path d="M1 1 L7 6 L1 11 Z" fill="#fff" stroke="#c4c4c4" stroke-width="1"/></svg><svg class="b" style="left:49px;top:1388px;" width="15" height="18" viewBox="0 0 15 18"><path d="M0 1 Q0 0 1 0 H14 Q15 0 15 1 V18 H9.5 V14.5 H5.5 V18 H0 Z" fill="#cabd3e"/><rect x="2.5" y="2.5" width="2" height="2" fill="#fff"/><rect x="2.5" y="5.9" width="2" height="2" fill="#fff"/><rect x="2.5" y="9.3" width="2" height="2" fill="#fff"/><rect x="6.1" y="2.5" width="2" height="2" fill="#fff"/><rect x="6.1" y="5.9" width="2" height="2" fill="#fff"/><rect x="6.1" y="9.3" width="2" height="2" fill="#fff"/><rect x="9.7" y="2.5" width="2" height="2" fill="#fff"/><rect x="9.7" y="5.9" width="2" height="2" fill="#fff"/><rect x="9.7" y="9.3" width="2" height="2" fill="#fff"/></svg><div class="t" style="top:1391.02px;font-size:16px;line-height:17.872px;color:#1f2328;letter-spacing:-0.053px;left:76px;">Sociétés</div><div class="b" style="left:26px;top:1431px;width:13px;height:0px;border-top:1px dotted #111;"></div><svg class="b" style="left:17px;top:1425px;" width="9" height="8" viewBox="0 0 9 8"><path d="M8.5 0 V8 H0 Z" fill="#333"/></svg><svg class="b" style="left:46px;top:1420px;" width="22" height="18" viewBox="0 0 22 18"><path d="M0 6 L11 0 L22 6 V18 H18.5 V8.5 H3.5 V18 H0 Z" fill="#1c2025"/><rect x="5" y="10" width="12" height="1.8" fill="#1c2025"/><rect x="5" y="13" width="12" height="1.8" fill="#1c2025"/><rect x="5" y="16" width="12" height="2" fill="#1c2025"/></svg><div class="t" style="top:1423.02px;font-size:16px;line-height:17.872px;color:#1f2328;letter-spacing:0.310px;left:76px;">Système administration</div><div class="b" style="left:55px;top:1464px;width:17px;height:0px;border-top:1px dotted #111;"></div><svg class="b" style="left:81px;top:1452.8px;" width="17" height="19" viewBox="0 0 17 19"><path d="M2.5 0 H17 V15 H3 Q1.8 15 1.8 16.2 Q1.8 17.4 3 17.4 H17 V19 H3 Q0 19 0 16.2 V2.5 Q0 0 2.5 0 Z" fill="#b04a31"/><circle cx="9.5" cy="5.5" r="2.6" fill="#fff"/><path d="M5.5 9.5 L13.5 13 M13.5 9.5 L5.5 13" stroke="#fff" stroke-width="1.1"/></svg><div class="t" style="top:1454.02px;font-size:16px;line-height:17.872px;color:#1f2328;letter-spacing:-0.290px;left:108.7px;">Dictionnaire PASSWORD</div><div class="b" style="left:55px;top:1496px;width:17px;height:0px;border-top:1px dotted #111;"></div><svg class="b" style="left:81.7px;top:1485px;" width="15" height="18" viewBox="0 0 15 18"><path d="M1.5 0 H9.5 L15 5.5 V16.5 Q15 18 13.5 18 H1.5 Q0 18 0 16.5 V1.5 Q0 0 1.5 0 Z" fill="#92d872"/><path d="M9.5 0 V5.5 H15" fill="#c6efb2"/><path d="M7.5 8 V15 M4.5 11 L7.5 8 L10.5 11" stroke="#fff" stroke-width="1.6" fill="none"/></svg><div class="t" style="top:1486.22px;font-size:16px;line-height:17.872px;color:#1f2328;letter-spacing:0.145px;left:108.7px;">Import CSV dans référentiel metier</div><div class="b" style="left:55px;top:1529px;width:17px;height:0px;border-top:1px dotted #111;"></div><svg class="b" style="left:78.6px;top:1517px;" width="21" height="19" viewBox="0 0 21 19"><rect x="2" y="2" width="17" height="15" fill="none" stroke="#efe82c" stroke-width="2"/><rect x="0" y="0" width="4" height="4" fill="#efe82c"/><rect x="0" y="15" width="4" height="4" fill="#efe82c"/><rect x="17" y="0" width="4" height="4" fill="#efe82c"/><rect x="17" y="15" width="4" height="4" fill="#efe82c"/><rect x="5" y="5" width="7" height="5.5" fill="#efe82c"/><rect x="9" y="8.5" width="7" height="5.5" fill="#efe82c"/></svg><div class="t" style="top:1518.72px;font-size:16px;line-height:17.872px;color:#1f2328;letter-spacing:-0.025px;left:108.7px;">Gestion des groupes d&#x27;accès</div><div class="b" style="left:55px;top:1561px;width:17px;height:0px;border-top:1px dotted #111;"></div><svg class="b" style="left:78px;top:1550.5px;" width="22" height="18" viewBox="0 0 22 18"><circle cx="7.5" cy="4.6" r="4.6" fill="#6aae48"/><path d="M0 18 V16.5 C0 12.5 2.8 10.8 5.5 10.8 H11 Q12.5 11 12.5 12.5 V18 Z" fill="#6aae48"/><rect x="13.5" y="11" width="8.5" height="7" rx="1" fill="#6aae48"/><path d="M15.3 11.5 V9.5 Q15.3 7 17.75 7 Q20.2 7 20.2 9.5 V11.5" stroke="#6aae48" stroke-width="1.6" fill="none"/></svg><div class="t" style="top:1551.02px;font-size:16px;line-height:17.872px;color:#1f2328;letter-spacing:0.036px;left:108.7px;">Gestion des accès utilisateurs</div><div class="b" style="left:55px;top:1593px;width:17px;height:0px;border-top:1px dotted #111;"></div><svg class="b" style="left:78px;top:1582.4px;" width="22" height="18" viewBox="0 0 22 18"><rect x="7.5" y="0" width="7" height="5.5" fill="none" stroke="#74b04c" stroke-width="1.8"/><path d="M11 5.5 V9 M0 9 H22 M4.5 9 V12 M17.5 9 V12" stroke="#74b04c" stroke-width="1.8"/><rect x="1" y="12" width="7" height="5.3" fill="none" stroke="#74b04c" stroke-width="1.8"/><rect x="14" y="12" width="7" height="5.3" fill="none" stroke="#74b04c" stroke-width="1.8"/></svg><div class="t" style="top:1583.22px;font-size:16px;line-height:17.872px;color:#1f2328;letter-spacing:-0.097px;left:108.7px;">Gestion des IP autorisées par Pays</div><div class="b" style="left:55px;top:1626px;width:17px;height:0px;border-top:1px dotted #111;"></div><svg class="b" style="left:79.5px;top:1615px;" width="19" height="19" viewBox="0 0 19 19"><circle cx="9.5" cy="9.5" r="9.5" fill="#6a9f46"/><ellipse cx="9.5" cy="9.5" rx="3.6" ry="9.5" fill="none" stroke="#fff" stroke-width="1.1"/><path d="M0 9.5 H19 M1.5 5 H17.5 M1.5 14 H17.5" stroke="#fff" stroke-width="1.1"/></svg><div class="t" style="top:1615.72px;font-size:16px;line-height:17.872px;color:#1f2328;letter-spacing:-0.024px;left:108.7px;">Gestion des pays autorisés</div><div class="b" style="left:496px;top:162px;width:351px;height:38px;background:#f6f7f9;"></div><div class="b" style="left:496px;top:162px;width:351px;height:1px;background:#dcdfe3;"></div><div class="b" style="left:496px;top:200px;width:351px;height:1px;background:#dfe2e6;"></div><svg class="b" style="left:517px;top:177px;" width="11" height="11" viewBox="0 0 11 11"><path d="M10.5 0 V10.5 H0 Z" fill="#8d939b"/></svg><div class="t" style="top:173.93px;font-size:15px;line-height:16.755px;color:#1c1f24;font-weight:700;letter-spacing:-0.019px;left:537px;">Protection</div><div class="t" style="top:212.97px;font-size:14.4px;line-height:16.085px;color:#2a2e34;left:506px;">Non (68)</div><div class="b" style="left:496px;top:239px;width:351px;height:1px;background:#dfe2e6;"></div><div class="t" style="top:251.97px;font-size:14.4px;line-height:16.085px;color:#2a2e34;left:506px;">Oui (7)</div><div class="b" style="left:496px;top:278px;width:351px;height:1px;background:#dfe2e6;"></div><div class="b" style="left:496px;top:289px;width:351px;height:1px;background:#dfe2e6;"></div><div class="b" style="left:508px;top:296px;width:180px;height:28px;background:#f8f9fa;border:1px solid #d3d6db;border-radius:4px;box-sizing:border-box;"></div><div class="t" style="top:300.03px;font-size:18.2px;line-height:20.329px;color:#3c4047;left:527px;">Sélection multiple</div><div class="b" style="left:496px;top:331px;width:351px;height:39px;background:#f6f7f9;"></div><div class="b" style="left:496px;top:330px;width:351px;height:2px;background:#dcdfe3;"></div><div class="b" style="left:496px;top:370px;width:351px;height:1px;background:#dfe2e6;"></div><svg class="b" style="left:517px;top:346px;" width="11" height="11" viewBox="0 0 11 11"><path d="M10.5 0 V10.5 H0 Z" fill="#8d939b"/></svg><div class="t" style="top:342.93px;font-size:15px;line-height:16.755px;color:#1c1f24;font-weight:700;letter-spacing:-0.251px;left:537px;">Systeme</div><svg class="b" style="left:821px;top:346.5px;" width="13" height="13" viewBox="0 0 13 13"><path d="M1.2 1.2 L11.8 11.8 M11.8 1.2 L1.2 11.8" stroke="#9197a0" stroke-width="2"/></svg><div class="t" style="top:382.97px;font-size:14.4px;line-height:16.085px;color:#2a2e34;left:531px;">Non (75)</div><div class="b" style="left:496px;top:408px;width:351px;height:1px;background:#dfe2e6;"></div><div class="b" style="left:496px;top:420px;width:351px;height:1px;background:#dfe2e6;"></div><div class="b" style="left:496px;top:432px;width:351px;height:1px;background:#dfe2e6;"></div><div class="b" style="left:496px;top:433px;width:351px;height:38px;background:#f6f7f9;"></div><div class="b" style="left:496px;top:432px;width:351px;height:2px;background:#dcdfe3;"></div><div class="b" style="left:496px;top:471px;width:351px;height:1px;background:#dfe2e6;"></div><svg class="b" style="left:517px;top:448px;" width="11" height="11" viewBox="0 0 11 11"><path d="M10.5 0 V10.5 H0 Z" fill="#8d939b"/></svg><div class="t" style="top:444.93px;font-size:15px;line-height:16.755px;color:#1c1f24;font-weight:700;letter-spacing:-0.349px;left:537px;">F° de Groupage</div><div class="t" style="top:483.97px;font-size:14.4px;line-height:16.085px;color:#2a2e34;left:506px;">Non (75)</div><div class="b" style="left:496px;top:510px;width:351px;height:1px;background:#dfe2e6;"></div><div class="b" style="left:496px;top:522px;width:351px;height:1px;background:#dfe2e6;"></div><div class="b" style="left:496px;top:534px;width:351px;height:39px;background:#f6f7f9;"></div><div class="b" style="left:496px;top:533px;width:351px;height:2px;background:#dcdfe3;"></div><div class="b" style="left:496px;top:573px;width:351px;height:1px;background:#dfe2e6;"></div><svg class="b" style="left:517px;top:549px;" width="11" height="11" viewBox="0 0 11 11"><path d="M10.5 0 V10.5 H0 Z" fill="#8d939b"/></svg><div class="t" style="top:545.92px;font-size:15px;line-height:16.755px;color:#1c1f24;font-weight:700;letter-spacing:-0.191px;left:537px;">Popup fichiers</div><div class="t" style="top:585.97px;font-size:14.4px;line-height:16.085px;color:#2a2e34;left:506px;">Non (67)</div><div class="b" style="left:496px;top:612px;width:351px;height:1px;background:#dfe2e6;"></div><div class="t" style="top:624.97px;font-size:14.4px;line-height:16.085px;color:#2a2e34;left:506px;">Oui (8)</div><div class="b" style="left:496px;top:650px;width:351px;height:1px;background:#dfe2e6;"></div><div class="b" style="left:496px;top:662px;width:351px;height:1px;background:#dfe2e6;"></div><div class="b" style="left:508px;top:669px;width:180px;height:28px;background:#f8f9fa;border:1px solid #d3d6db;border-radius:4px;box-sizing:border-box;"></div><div class="t" style="top:673.03px;font-size:18.2px;line-height:20.329px;color:#3c4047;left:527px;">Sélection multiple</div><div class="b" style="left:496px;top:704px;width:351px;height:38px;background:#f6f7f9;"></div><div class="b" style="left:496px;top:703px;width:351px;height:2px;background:#dcdfe3;"></div><div class="b" style="left:496px;top:742px;width:351px;height:1px;background:#dfe2e6;"></div><svg class="b" style="left:517px;top:719px;" width="11" height="11" viewBox="0 0 11 11"><path d="M10.5 0 V10.5 H0 Z" fill="#8d939b"/></svg><div class="t" style="top:715.92px;font-size:15px;line-height:16.755px;color:#1c1f24;font-weight:700;letter-spacing:-0.087px;left:537px;">Type Durée</div><div class="t" style="top:754.97px;font-size:14.4px;line-height:16.085px;color:#2a2e34;left:506px;">Jours (75)</div><div class="b" style="left:496px;top:781px;width:351px;height:1px;background:#dfe2e6;"></div><div class="b" style="left:496px;top:793px;width:351px;height:1px;background:#dfe2e6;"></div><div class="b" style="left:496px;top:805px;width:351px;height:1px;background:#dfe2e6;"></div><div class="b" style="left:496px;top:162px;width:1px;height:643px;background:#dfe2e6;"></div><div class="b" style="left:846px;top:162px;width:1px;height:643px;background:#dfe2e6;"></div><div class="b" style="left:878px;top:173px;width:183px;height:39px;background:#fff;border:1px solid #d4d7dc;border-radius:5px;box-sizing:border-box;"></div><div class="t" style="top:183.43px;font-size:17.2px;line-height:19.212px;color:#7d828a;letter-spacing:-0.015px;left:889px;">Recherche rapid</div><svg class="b" style="left:1031px;top:182px;" width="20" height="21" viewBox="0 0 20 21"><circle cx="12" cy="8.5" r="6" fill="none" stroke="#a3abb8" stroke-width="2.2"/><path d="M7.8 12.8 L1.8 19" stroke="#a3abb8" stroke-width="2.6" stroke-linecap="round"/></svg><div class="b" style="left:1217px;top:174px;width:141px;height:37px;background:#f6f7f9;border:1px solid #dcdfe4;border-radius:5px;box-sizing:border-box;"></div><div class="t" style="top:183.25px;font-size:17.4px;line-height:19.436px;color:#30343a;letter-spacing:0.040px;left:1266px;">Colonnes</div><svg class="b" style="left:1235px;top:182px;" width="21" height="18" viewBox="0 0 21 18"><rect x="1.8" y="1.9" width="17" height="14.9" rx="1.8" fill="none" stroke="#2a2e34" stroke-width="2"/><rect x="1.5" y="1.2" width="17.6" height="4" rx="1" fill="#2a2e34"/><path d="M10.3 5 V16" stroke="#2a2e34" stroke-width="1.9"/></svg><div class="b" style="left:1362px;top:174px;width:90px;height:37px;background:#f6f7f9;border:1px solid #dcdfe4;border-radius:5px;box-sizing:border-box;"></div><div class="t" style="top:183.25px;font-size:17.4px;line-height:19.436px;color:#30343a;letter-spacing:0.178px;left:1414px;">Tri</div><svg class="b" style="left:1381px;top:182px;" width="21" height="18" viewBox="0 0 21 18"><path d="M5.4 1 V15" stroke="#2a2e34" stroke-width="2.4"/><path d="M1.6 11.4 L5.4 15.6 L9.2 11.4" stroke="#2a2e34" stroke-width="2.6" fill="none"/><path d="M11.6 8.6 L15.1 1.6 L18.6 8.6 M13.2 6 H17" stroke="#2a2e34" stroke-width="2" fill="none"/><path d="M11.8 11.2 H18.6 L12.2 15.8 H19" stroke="#2a2e34" stroke-width="2" fill="none"/></svg><div class="b" style="left:1456px;top:174px;width:138px;height:37px;background:#f6f7f9;border:1px solid #dcdfe4;border-radius:5px;box-sizing:border-box;"></div><div class="t" style="top:183.25px;font-size:17.4px;line-height:19.436px;color:#30343a;letter-spacing:0.022px;left:1506px;">Export</div><svg class="b" style="left:1474px;top:183px;" width="21" height="20" viewBox="0 0 21 20"><path d="M8.6 0.8 H12.4 L13 5 H8 Z" transform="rotate(0 10.5 10)" fill="#2a2e34"/><path d="M8.6 0.8 H12.4 L13 5 H8 Z" transform="rotate(45 10.5 10)" fill="#2a2e34"/><path d="M8.6 0.8 H12.4 L13 5 H8 Z" transform="rotate(90 10.5 10)" fill="#2a2e34"/><path d="M8.6 0.8 H12.4 L13 5 H8 Z" transform="rotate(135 10.5 10)" fill="#2a2e34"/><path d="M8.6 0.8 H12.4 L13 5 H8 Z" transform="rotate(180 10.5 10)" fill="#2a2e34"/><path d="M8.6 0.8 H12.4 L13 5 H8 Z" transform="rotate(225 10.5 10)" fill="#2a2e34"/><path d="M8.6 0.8 H12.4 L13 5 H8 Z" transform="rotate(270 10.5 10)" fill="#2a2e34"/><path d="M8.6 0.8 H12.4 L13 5 H8 Z" transform="rotate(315 10.5 10)" fill="#2a2e34"/><circle cx="10.5" cy="10" r="6.6" fill="#2a2e34"/><circle cx="10.5" cy="10" r="2.5" fill="#f6f7f9"/></svg><svg class="b" style="left:1563px;top:188px;" width="13" height="8" viewBox="0 0 13 8"><path d="M0 0 H13 L6.5 7.5 Z" fill="#2a2e34"/></svg><div class="b" style="left:1611px;top:181px;width:2px;height:24px;background:#c8ccd2;"></div><div class="b" style="left:1632px;top:174px;width:150px;height:37px;background:#4a7ff6;border-radius:5px;"></div><svg class="b" style="left:1650px;top:181px;" width="20" height="21" viewBox="0 0 20 21"><circle cx="8.3" cy="8.3" r="6.3" fill="none" stroke="#fff" stroke-width="2.6"/><path d="M13 13 L19 19.5" stroke="#fff" stroke-width="3"/></svg><div class="t" style="top:183.25px;font-size:17.4px;line-height:19.436px;color:#ffffff;letter-spacing:-0.319px;left:1681.3px;">Recherche</div><div class="b" style="left:1863px;top:174px;width:122px;height:37px;background:#62a14c;border-radius:5px;"></div><svg class="b" style="left:1882px;top:183px;" width="16" height="16" viewBox="0 0 16 16"><path d="M8 0 V16 M0 8 H16" stroke="#fff" stroke-width="2.4"/></svg><div class="t" style="top:183.25px;font-size:17.4px;line-height:19.436px;color:#ffffff;letter-spacing:0.378px;left:1908.7px;">Ajouter</div><div class="b" style="left:1989px;top:174px;width:218px;height:37px;background:#f8f9fa;border:1px solid #dcdfe4;border-radius:5px;box-sizing:border-box;"></div><div class="t" style="top:183.25px;font-size:17.4px;line-height:19.436px;color:#30343a;letter-spacing:-0.064px;left:2038px;">Distribuer les accès</div><svg class="b" style="left:2007px;top:182px;" width="20" height="18" viewBox="0 0 20 18"><ellipse cx="10" cy="8.6" rx="6.8" ry="7" fill="none" stroke="#2a2e34" stroke-width="1.4"/><rect x="5.9" y="4.2" width="8.4" height="8.9" rx="3" fill="#2a2e34"/><circle cx="10" cy="7.4" r="1.8" fill="#f8f9fa"/><path d="M9 8 L8.4 11.6 H11.6 L11 8 Z" fill="#f8f9fa"/><path d="M1.5 1.5 L5 5 M17.5 1.7 L14.8 4.4 M2.2 16.2 L5 13.2 M18.5 17 L15.2 13.2" stroke="#2a2e34" stroke-width="1.6"/><circle cx="17.6" cy="1.9" r="1.9" fill="#2a2e34"/><circle cx="2.3" cy="16.1" r="1.9" fill="#2a2e34"/></svg><div class="b" style="left:879px;top:239px;width:1328px;height:1399px;background:#fff;"></div><div class="b" style="left:879px;top:239px;width:1328px;height:1px;background:#dde0e5;"></div><div class="b" style="left:879px;top:281px;width:1328px;height:2px;background:#d9dde2;"></div><div class="b" style="left:879px;top:239px;width:1px;height:1399px;background:#dde0e5;"></div><div class="b" style="left:956px;top:239px;width:1px;height:1399px;background:#dde0e5;"></div><div class="b" style="left:1082px;top:239px;width:1px;height:1399px;background:#dde0e5;"></div><div class="b" style="left:1441px;top:239px;width:1px;height:1399px;background:#dde0e5;"></div><div class="b" style="left:1526px;top:239px;width:1px;height:1399px;background:#dde0e5;"></div><div class="b" style="left:1657px;top:239px;width:1px;height:1399px;background:#dde0e5;"></div><div class="b" style="left:1818px;top:239px;width:1px;height:1399px;background:#dde0e5;"></div><div class="b" style="left:1942px;top:239px;width:1px;height:1399px;background:#dde0e5;"></div><div class="b" style="left:2049px;top:239px;width:1px;height:1399px;background:#dde0e5;"></div><div class="b" style="left:2206px;top:239px;width:1px;height:1399px;background:#dde0e5;"></div><div class="b" style="left:879px;top:337px;width:1328px;height:1px;background:#dde0e5;"></div><div class="b" style="left:879px;top:392px;width:1328px;height:1px;background:#dde0e5;"></div><div class="b" style="left:879px;top:447px;width:1328px;height:1px;background:#dde0e5;"></div><div class="b" style="left:879px;top:502px;width:1328px;height:1px;background:#dde0e5;"></div><div class="b" style="left:879px;top:557px;width:1328px;height:1px;background:#dde0e5;"></div><div class="b" style="left:879px;top:612px;width:1328px;height:1px;background:#dde0e5;"></div><div class="b" style="left:879px;top:667px;width:1328px;height:1px;background:#dde0e5;"></div><div class="b" style="left:879px;top:722px;width:1328px;height:1px;background:#dde0e5;"></div><div class="b" style="left:879px;top:777px;width:1328px;height:1px;background:#dde0e5;"></div><div class="b" style="left:879px;top:832px;width:1328px;height:1px;background:#dde0e5;"></div><div class="b" style="left:879px;top:887px;width:1328px;height:1px;background:#dde0e5;"></div><div class="b" style="left:879px;top:942px;width:1328px;height:1px;background:#dde0e5;"></div><div class="b" style="left:879px;top:997px;width:1328px;height:1px;background:#dde0e5;"></div><div class="b" style="left:879px;top:1052px;width:1328px;height:1px;background:#dde0e5;"></div><div class="b" style="left:879px;top:1107px;width:1328px;height:1px;background:#dde0e5;"></div><div class="b" style="left:879px;top:1162px;width:1328px;height:1px;background:#dde0e5;"></div><div class="b" style="left:879px;top:1217px;width:1328px;height:1px;background:#dde0e5;"></div><div class="b" style="left:879px;top:1272px;width:1328px;height:1px;background:#dde0e5;"></div><div class="b" style="left:879px;top:1327px;width:1328px;height:1px;background:#dde0e5;"></div><div class="b" style="left:879px;top:1382px;width:1328px;height:1px;background:#dde0e5;"></div><div class="b" style="left:879px;top:1437px;width:1328px;height:1px;background:#dde0e5;"></div><div class="b" style="left:879px;top:1492px;width:1328px;height:1px;background:#dde0e5;"></div><div class="b" style="left:879px;top:1547px;width:1328px;height:1px;background:#dde0e5;"></div><div class="b" style="left:879px;top:1602px;width:1328px;height:1px;background:#dde0e5;"></div><div class="t" style="top:250.84px;font-size:17.3px;line-height:19.324px;color:#1b1e23;font-weight:700;letter-spacing:0.535px;left:964.7px;">Identifiant</div><svg class="b" style="left:1056.5px;top:250px;" width="14" height="20" viewBox="0 0 14 20"><path d="M7 0 L13.5 8 H0.5 Z M0.5 11 H13.5 L7 19 Z" fill="#8b94a3"/></svg><div class="t" style="top:250.84px;font-size:17.3px;line-height:19.324px;color:#1b1e23;font-weight:700;letter-spacing:0.050px;left:1090px;">Libellé</div><div class="t" style="top:250.84px;font-size:17.3px;line-height:19.324px;color:#1b1e23;font-weight:700;letter-spacing:-0.109px;left:1448.8px;">Durée</div><svg class="b" style="left:1501.5px;top:250px;" width="14" height="20" viewBox="0 0 14 20"><path d="M7 0 L13.5 8 H0.5 Z M0.5 11 H13.5 L7 19 Z" fill="#8b94a3"/></svg><div class="t" style="top:250.84px;font-size:17.3px;line-height:19.324px;color:#1b1e23;font-weight:700;letter-spacing:-0.038px;left:1535px;">Type Durée</div><svg class="b" style="left:1632px;top:250px;" width="14" height="20" viewBox="0 0 14 20"><path d="M7 0 L13.5 8 H0.5 Z M0.5 11 H13.5 L7 19 Z" fill="#8b94a3"/></svg><div class="t" style="top:250.84px;font-size:17.3px;line-height:19.324px;color:#1b1e23;font-weight:700;letter-spacing:-0.307px;left:1664.6px;">F° de Groupage</div><svg class="b" style="left:1793px;top:250px;" width="14" height="20" viewBox="0 0 14 20"><path d="M7 0 L13.5 8 H0.5 Z M0.5 11 H13.5 L7 19 Z" fill="#8b94a3"/></svg><div class="t" style="top:250.84px;font-size:17.3px;line-height:19.324px;color:#1b1e23;font-weight:700;letter-spacing:0.083px;left:1826.7px;">Protection</div><svg class="b" style="left:1918px;top:250px;" width="14" height="20" viewBox="0 0 14 20"><path d="M7 0 L13.5 8 H0.5 Z M0.5 11 H13.5 L7 19 Z" fill="#8b94a3"/></svg><div class="t" style="top:250.84px;font-size:17.3px;line-height:19.324px;color:#1b1e23;font-weight:700;letter-spacing:-0.195px;left:1950px;">Systeme</div><svg class="b" style="left:2025px;top:250px;" width="14" height="20" viewBox="0 0 14 20"><path d="M7 0 L13.5 8 H0.5 Z M0.5 11 H13.5 L7 19 Z" fill="#8b94a3"/></svg><div class="t" style="top:250.84px;font-size:17.3px;line-height:19.324px;color:#1b1e23;font-weight:700;letter-spacing:-0.104px;left:2057.7px;">Popup fichiers</div><svg class="b" style="left:2181px;top:250px;" width="14" height="20" viewBox="0 0 14 20"><path d="M7 0 L13.5 8 H0.5 Z M0.5 11 H13.5 L7 19 Z" fill="#8b94a3"/></svg><svg class="b" style="left:1416px;top:255px;" width="13" height="10" viewBox="0 0 13 10"><path d="M0 0 H13 L6.5 9.5 Z" fill="#8b94a3"/></svg><svg class="b" style="left:893px;top:304.8px;" width="18" height="6" viewBox="0 0 18 6"><circle cx="3.3" cy="3" r="2.15" fill="#383838"/><circle cx="9.2" cy="3" r="2.15" fill="#383838"/><circle cx="15.100000000000001" cy="3" r="2.15" fill="#383838"/></svg><svg class="b" style="left:923px;top:298px;" width="21" height="21" viewBox="0 0 21 21"><path d="M9 2.8 H4.2 Q1.1 2.8 1.1 5.9 V15.9 Q1.1 19 4.2 19 H14.4 Q17.5 19 17.5 15.9 V11.2" fill="none" stroke="#383838" stroke-width="1.9" stroke-linecap="round"/><path d="M7.2 13.2 L16 4.4" stroke="#383838" stroke-width="4.2"/><path d="M5.9 14.8 L6.6 10.9 L10.1 14.2 Z" fill="#383838"/><path d="M18 2.6 L19.2 1.4" stroke="#383838" stroke-width="4" stroke-linecap="round"/></svg><div class="t" style="top:293.92px;font-size:17.1px;line-height:19.101px;color:#272b31;letter-spacing:-0.464px;right:1173.16px;text-align:right;">104</div><div class="t" style="top:293.92px;font-size:17.1px;line-height:19.101px;color:#272b31;letter-spacing:0.252px;left:1090px;">Technicien de maintenance</div><div class="t" style="top:293.92px;font-size:17.1px;line-height:19.101px;color:#272b31;letter-spacing:-0.412px;right:728.11px;text-align:right;">1094</div><div class="t" style="top:293.92px;font-size:17.1px;line-height:19.101px;color:#272b31;letter-spacing:0.306px;right:597.19px;text-align:right;">Jours</div><div class="t" style="top:293.92px;font-size:17.1px;line-height:19.101px;color:#272b31;letter-spacing:0.459px;right:435.54px;text-align:right;">Non</div><div class="t" style="top:293.92px;font-size:17.1px;line-height:19.101px;color:#272b31;letter-spacing:0.459px;right:311.84px;text-align:right;">Non</div><div class="t" style="top:293.92px;font-size:17.1px;line-height:19.101px;color:#272b31;letter-spacing:0.459px;right:204.84px;text-align:right;">Non</div><div class="t" style="top:293.92px;font-size:17.1px;line-height:19.101px;color:#272b31;letter-spacing:0.389px;right:48.81px;text-align:right;">Oui</div><svg class="b" style="left:893px;top:359.8px;" width="18" height="6" viewBox="0 0 18 6"><circle cx="3.3" cy="3" r="2.15" fill="#383838"/><circle cx="9.2" cy="3" r="2.15" fill="#383838"/><circle cx="15.100000000000001" cy="3" r="2.15" fill="#383838"/></svg><svg class="b" style="left:923px;top:353px;" width="21" height="21" viewBox="0 0 21 21"><path d="M9 2.8 H4.2 Q1.1 2.8 1.1 5.9 V15.9 Q1.1 19 4.2 19 H14.4 Q17.5 19 17.5 15.9 V11.2" fill="none" stroke="#383838" stroke-width="1.9" stroke-linecap="round"/><path d="M7.2 13.2 L16 4.4" stroke="#383838" stroke-width="4.2"/><path d="M5.9 14.8 L6.6 10.9 L10.1 14.2 Z" fill="#383838"/><path d="M18 2.6 L19.2 1.4" stroke="#383838" stroke-width="4" stroke-linecap="round"/></svg><div class="t" style="top:348.92px;font-size:17.1px;line-height:19.101px;color:#272b31;letter-spacing:-0.618px;right:1173.32px;text-align:right;">17</div><div class="t" style="top:348.92px;font-size:17.1px;line-height:19.101px;color:#272b31;letter-spacing:0.398px;left:1090px;">SYSTEME</div><div class="t" style="top:348.92px;font-size:17.1px;line-height:19.101px;color:#272b31;letter-spacing:-0.412px;right:728.11px;text-align:right;">1094</div><div class="t" style="top:348.92px;font-size:17.1px;line-height:19.101px;color:#272b31;letter-spacing:0.306px;right:597.19px;text-align:right;">Jours</div><div class="t" style="top:348.92px;font-size:17.1px;line-height:19.101px;color:#272b31;letter-spacing:0.459px;right:435.54px;text-align:right;">Non</div><div class="t" style="top:348.92px;font-size:17.1px;line-height:19.101px;color:#272b31;letter-spacing:0.459px;right:311.84px;text-align:right;">Non</div><div class="t" style="top:348.92px;font-size:17.1px;line-height:19.101px;color:#272b31;letter-spacing:0.459px;right:204.84px;text-align:right;">Non</div><div class="t" style="top:348.92px;font-size:17.1px;line-height:19.101px;color:#272b31;letter-spacing:0.459px;right:48.74px;text-align:right;">Non</div><svg class="b" style="left:893px;top:414.8px;" width="18" height="6" viewBox="0 0 18 6"><circle cx="3.3" cy="3" r="2.15" fill="#383838"/><circle cx="9.2" cy="3" r="2.15" fill="#383838"/><circle cx="15.100000000000001" cy="3" r="2.15" fill="#383838"/></svg><svg class="b" style="left:923px;top:408px;" width="21" height="21" viewBox="0 0 21 21"><path d="M9 2.8 H4.2 Q1.1 2.8 1.1 5.9 V15.9 Q1.1 19 4.2 19 H14.4 Q17.5 19 17.5 15.9 V11.2" fill="none" stroke="#383838" stroke-width="1.9" stroke-linecap="round"/><path d="M7.2 13.2 L16 4.4" stroke="#383838" stroke-width="4.2"/><path d="M5.9 14.8 L6.6 10.9 L10.1 14.2 Z" fill="#383838"/><path d="M18 2.6 L19.2 1.4" stroke="#383838" stroke-width="4" stroke-linecap="round"/></svg><div class="t" style="top:403.92px;font-size:17.1px;line-height:19.101px;color:#272b31;letter-spacing:-0.618px;right:1173.32px;text-align:right;">28</div><div class="t" style="top:403.92px;font-size:17.1px;line-height:19.101px;color:#272b31;letter-spacing:0.292px;left:1090px;">Support</div><div class="t" style="top:403.92px;font-size:17.1px;line-height:19.101px;color:#272b31;letter-spacing:-0.412px;right:728.11px;text-align:right;">1094</div><div class="t" style="top:403.92px;font-size:17.1px;line-height:19.101px;color:#272b31;letter-spacing:0.306px;right:597.19px;text-align:right;">Jours</div><div class="t" style="top:403.92px;font-size:17.1px;line-height:19.101px;color:#272b31;letter-spacing:0.459px;right:435.54px;text-align:right;">Non</div><div class="t" style="top:403.92px;font-size:17.1px;line-height:19.101px;color:#272b31;letter-spacing:0.459px;right:311.84px;text-align:right;">Non</div><div class="t" style="top:403.92px;font-size:17.1px;line-height:19.101px;color:#272b31;letter-spacing:0.459px;right:204.84px;text-align:right;">Non</div><div class="t" style="top:403.92px;font-size:17.1px;line-height:19.101px;color:#272b31;letter-spacing:0.459px;right:48.74px;text-align:right;">Non</div><svg class="b" style="left:893px;top:469.8px;" width="18" height="6" viewBox="0 0 18 6"><circle cx="3.3" cy="3" r="2.15" fill="#383838"/><circle cx="9.2" cy="3" r="2.15" fill="#383838"/><circle cx="15.100000000000001" cy="3" r="2.15" fill="#383838"/></svg><svg class="b" style="left:923px;top:463px;" width="21" height="21" viewBox="0 0 21 21"><path d="M9 2.8 H4.2 Q1.1 2.8 1.1 5.9 V15.9 Q1.1 19 4.2 19 H14.4 Q17.5 19 17.5 15.9 V11.2" fill="none" stroke="#383838" stroke-width="1.9" stroke-linecap="round"/><path d="M7.2 13.2 L16 4.4" stroke="#383838" stroke-width="4.2"/><path d="M5.9 14.8 L6.6 10.9 L10.1 14.2 Z" fill="#383838"/><path d="M18 2.6 L19.2 1.4" stroke="#383838" stroke-width="4" stroke-linecap="round"/></svg><div class="t" style="top:458.92px;font-size:17.1px;line-height:19.101px;color:#272b31;letter-spacing:-0.618px;right:1173.32px;text-align:right;">63</div><div class="t" style="top:458.92px;font-size:17.1px;line-height:19.101px;color:#272b31;letter-spacing:0.267px;left:1090px;">Supervision ECM A-B</div><div class="t" style="top:458.92px;font-size:17.1px;line-height:19.101px;color:#272b31;letter-spacing:-0.412px;right:728.11px;text-align:right;">1094</div><div class="t" style="top:458.92px;font-size:17.1px;line-height:19.101px;color:#272b31;letter-spacing:0.306px;right:597.19px;text-align:right;">Jours</div><div class="t" style="top:458.92px;font-size:17.1px;line-height:19.101px;color:#272b31;letter-spacing:0.459px;right:435.54px;text-align:right;">Non</div><div class="t" style="top:458.92px;font-size:17.1px;line-height:19.101px;color:#272b31;letter-spacing:0.459px;right:311.84px;text-align:right;">Non</div><div class="t" style="top:458.92px;font-size:17.1px;line-height:19.101px;color:#272b31;letter-spacing:0.459px;right:204.84px;text-align:right;">Non</div><div class="t" style="top:458.92px;font-size:17.1px;line-height:19.101px;color:#272b31;letter-spacing:0.459px;right:48.74px;text-align:right;">Non</div><svg class="b" style="left:893px;top:524.8px;" width="18" height="6" viewBox="0 0 18 6"><circle cx="3.3" cy="3" r="2.15" fill="#383838"/><circle cx="9.2" cy="3" r="2.15" fill="#383838"/><circle cx="15.100000000000001" cy="3" r="2.15" fill="#383838"/></svg><svg class="b" style="left:923px;top:518px;" width="21" height="21" viewBox="0 0 21 21"><path d="M9 2.8 H4.2 Q1.1 2.8 1.1 5.9 V15.9 Q1.1 19 4.2 19 H14.4 Q17.5 19 17.5 15.9 V11.2" fill="none" stroke="#383838" stroke-width="1.9" stroke-linecap="round"/><path d="M7.2 13.2 L16 4.4" stroke="#383838" stroke-width="4.2"/><path d="M5.9 14.8 L6.6 10.9 L10.1 14.2 Z" fill="#383838"/><path d="M18 2.6 L19.2 1.4" stroke="#383838" stroke-width="4" stroke-linecap="round"/></svg><div class="t" style="top:513.92px;font-size:17.1px;line-height:19.101px;color:#272b31;letter-spacing:-0.618px;right:1173.32px;text-align:right;">64</div><div class="t" style="top:513.92px;font-size:17.1px;line-height:19.101px;color:#272b31;letter-spacing:0.267px;left:1090px;">Superviseur</div><div class="t" style="top:513.92px;font-size:17.1px;line-height:19.101px;color:#272b31;letter-spacing:-0.412px;right:728.11px;text-align:right;">1094</div><div class="t" style="top:513.92px;font-size:17.1px;line-height:19.101px;color:#272b31;letter-spacing:0.306px;right:597.19px;text-align:right;">Jours</div><div class="t" style="top:513.92px;font-size:17.1px;line-height:19.101px;color:#272b31;letter-spacing:0.459px;right:435.54px;text-align:right;">Non</div><div class="t" style="top:513.92px;font-size:17.1px;line-height:19.101px;color:#272b31;letter-spacing:0.459px;right:311.84px;text-align:right;">Non</div><div class="t" style="top:513.92px;font-size:17.1px;line-height:19.101px;color:#272b31;letter-spacing:0.459px;right:204.84px;text-align:right;">Non</div><div class="t" style="top:513.92px;font-size:17.1px;line-height:19.101px;color:#272b31;letter-spacing:0.459px;right:48.74px;text-align:right;">Non</div><svg class="b" style="left:893px;top:579.8px;" width="18" height="6" viewBox="0 0 18 6"><circle cx="3.3" cy="3" r="2.15" fill="#383838"/><circle cx="9.2" cy="3" r="2.15" fill="#383838"/><circle cx="15.100000000000001" cy="3" r="2.15" fill="#383838"/></svg><svg class="b" style="left:923px;top:573px;" width="21" height="21" viewBox="0 0 21 21"><path d="M9 2.8 H4.2 Q1.1 2.8 1.1 5.9 V15.9 Q1.1 19 4.2 19 H14.4 Q17.5 19 17.5 15.9 V11.2" fill="none" stroke="#383838" stroke-width="1.9" stroke-linecap="round"/><path d="M7.2 13.2 L16 4.4" stroke="#383838" stroke-width="4.2"/><path d="M5.9 14.8 L6.6 10.9 L10.1 14.2 Z" fill="#383838"/><path d="M18 2.6 L19.2 1.4" stroke="#383838" stroke-width="4" stroke-linecap="round"/></svg><div class="t" style="top:568.92px;font-size:17.1px;line-height:19.101px;color:#272b31;letter-spacing:-0.618px;right:1173.32px;text-align:right;">27</div><div class="t" style="top:568.92px;font-size:17.1px;line-height:19.101px;color:#272b31;letter-spacing:0.262px;left:1090px;">Sécurité</div><div class="t" style="top:568.92px;font-size:17.1px;line-height:19.101px;color:#272b31;letter-spacing:-0.412px;right:728.11px;text-align:right;">1094</div><div class="t" style="top:568.92px;font-size:17.1px;line-height:19.101px;color:#272b31;letter-spacing:0.306px;right:597.19px;text-align:right;">Jours</div><div class="t" style="top:568.92px;font-size:17.1px;line-height:19.101px;color:#272b31;letter-spacing:0.459px;right:435.54px;text-align:right;">Non</div><div class="t" style="top:568.92px;font-size:17.1px;line-height:19.101px;color:#272b31;letter-spacing:0.459px;right:311.84px;text-align:right;">Non</div><div class="t" style="top:568.92px;font-size:17.1px;line-height:19.101px;color:#272b31;letter-spacing:0.459px;right:204.84px;text-align:right;">Non</div><div class="t" style="top:568.92px;font-size:17.1px;line-height:19.101px;color:#272b31;letter-spacing:0.459px;right:48.74px;text-align:right;">Non</div><svg class="b" style="left:893px;top:634.8px;" width="18" height="6" viewBox="0 0 18 6"><circle cx="3.3" cy="3" r="2.15" fill="#383838"/><circle cx="9.2" cy="3" r="2.15" fill="#383838"/><circle cx="15.100000000000001" cy="3" r="2.15" fill="#383838"/></svg><svg class="b" style="left:923px;top:628px;" width="21" height="21" viewBox="0 0 21 21"><path d="M9 2.8 H4.2 Q1.1 2.8 1.1 5.9 V15.9 Q1.1 19 4.2 19 H14.4 Q17.5 19 17.5 15.9 V11.2" fill="none" stroke="#383838" stroke-width="1.9" stroke-linecap="round"/><path d="M7.2 13.2 L16 4.4" stroke="#383838" stroke-width="4.2"/><path d="M5.9 14.8 L6.6 10.9 L10.1 14.2 Z" fill="#383838"/><path d="M18 2.6 L19.2 1.4" stroke="#383838" stroke-width="4" stroke-linecap="round"/></svg><div class="t" style="top:623.92px;font-size:17.1px;line-height:19.101px;color:#272b31;letter-spacing:-0.618px;right:1173.32px;text-align:right;">58</div><div class="t" style="top:623.92px;font-size:17.1px;line-height:19.101px;color:#272b31;letter-spacing:0.244px;left:1090px;">Responsable trafic</div><div class="t" style="top:623.92px;font-size:17.1px;line-height:19.101px;color:#272b31;letter-spacing:-0.412px;right:728.11px;text-align:right;">1094</div><div class="t" style="top:623.92px;font-size:17.1px;line-height:19.101px;color:#272b31;letter-spacing:0.306px;right:597.19px;text-align:right;">Jours</div><div class="t" style="top:623.92px;font-size:17.1px;line-height:19.101px;color:#272b31;letter-spacing:0.459px;right:435.54px;text-align:right;">Non</div><div class="t" style="top:623.92px;font-size:17.1px;line-height:19.101px;color:#272b31;letter-spacing:0.459px;right:311.84px;text-align:right;">Non</div><div class="t" style="top:623.92px;font-size:17.1px;line-height:19.101px;color:#272b31;letter-spacing:0.459px;right:204.84px;text-align:right;">Non</div><div class="t" style="top:623.92px;font-size:17.1px;line-height:19.101px;color:#272b31;letter-spacing:0.459px;right:48.74px;text-align:right;">Non</div><svg class="b" style="left:893px;top:689.8px;" width="18" height="6" viewBox="0 0 18 6"><circle cx="3.3" cy="3" r="2.15" fill="#383838"/><circle cx="9.2" cy="3" r="2.15" fill="#383838"/><circle cx="15.100000000000001" cy="3" r="2.15" fill="#383838"/></svg><svg class="b" style="left:923px;top:683px;" width="21" height="21" viewBox="0 0 21 21"><path d="M9 2.8 H4.2 Q1.1 2.8 1.1 5.9 V15.9 Q1.1 19 4.2 19 H14.4 Q17.5 19 17.5 15.9 V11.2" fill="none" stroke="#383838" stroke-width="1.9" stroke-linecap="round"/><path d="M7.2 13.2 L16 4.4" stroke="#383838" stroke-width="4.2"/><path d="M5.9 14.8 L6.6 10.9 L10.1 14.2 Z" fill="#383838"/><path d="M18 2.6 L19.2 1.4" stroke="#383838" stroke-width="4" stroke-linecap="round"/></svg><div class="t" style="top:678.92px;font-size:17.1px;line-height:19.101px;color:#272b31;letter-spacing:-0.618px;right:1173.32px;text-align:right;">59</div><div class="t" style="top:678.92px;font-size:17.1px;line-height:19.101px;color:#272b31;letter-spacing:0.261px;left:1090px;">Responsable technique</div><div class="t" style="top:678.92px;font-size:17.1px;line-height:19.101px;color:#272b31;letter-spacing:-0.412px;right:728.11px;text-align:right;">1094</div><div class="t" style="top:678.92px;font-size:17.1px;line-height:19.101px;color:#272b31;letter-spacing:0.306px;right:597.19px;text-align:right;">Jours</div><div class="t" style="top:678.92px;font-size:17.1px;line-height:19.101px;color:#272b31;letter-spacing:0.459px;right:435.54px;text-align:right;">Non</div><div class="t" style="top:678.92px;font-size:17.1px;line-height:19.101px;color:#272b31;letter-spacing:0.459px;right:311.84px;text-align:right;">Non</div><div class="t" style="top:678.92px;font-size:17.1px;line-height:19.101px;color:#272b31;letter-spacing:0.459px;right:204.84px;text-align:right;">Non</div><div class="t" style="top:678.92px;font-size:17.1px;line-height:19.101px;color:#272b31;letter-spacing:0.459px;right:48.74px;text-align:right;">Non</div><svg class="b" style="left:893px;top:744.8px;" width="18" height="6" viewBox="0 0 18 6"><circle cx="3.3" cy="3" r="2.15" fill="#383838"/><circle cx="9.2" cy="3" r="2.15" fill="#383838"/><circle cx="15.100000000000001" cy="3" r="2.15" fill="#383838"/></svg><svg class="b" style="left:923px;top:738px;" width="21" height="21" viewBox="0 0 21 21"><path d="M9 2.8 H4.2 Q1.1 2.8 1.1 5.9 V15.9 Q1.1 19 4.2 19 H14.4 Q17.5 19 17.5 15.9 V11.2" fill="none" stroke="#383838" stroke-width="1.9" stroke-linecap="round"/><path d="M7.2 13.2 L16 4.4" stroke="#383838" stroke-width="4.2"/><path d="M5.9 14.8 L6.6 10.9 L10.1 14.2 Z" fill="#383838"/><path d="M18 2.6 L19.2 1.4" stroke="#383838" stroke-width="4" stroke-linecap="round"/></svg><div class="t" style="top:733.92px;font-size:17.1px;line-height:19.101px;color:#272b31;letter-spacing:-0.618px;right:1173.32px;text-align:right;">32</div><div class="t" style="top:733.92px;font-size:17.1px;line-height:19.101px;color:#272b31;letter-spacing:0.252px;left:1090px;">Responsable Pôle Opérationnel</div><div class="t" style="top:733.92px;font-size:17.1px;line-height:19.101px;color:#272b31;letter-spacing:-0.412px;right:728.11px;text-align:right;">1094</div><div class="t" style="top:733.92px;font-size:17.1px;line-height:19.101px;color:#272b31;letter-spacing:0.306px;right:597.19px;text-align:right;">Jours</div><div class="t" style="top:733.92px;font-size:17.1px;line-height:19.101px;color:#272b31;letter-spacing:0.459px;right:435.54px;text-align:right;">Non</div><div class="t" style="top:733.92px;font-size:17.1px;line-height:19.101px;color:#272b31;letter-spacing:0.459px;right:311.84px;text-align:right;">Non</div><div class="t" style="top:733.92px;font-size:17.1px;line-height:19.101px;color:#272b31;letter-spacing:0.459px;right:204.84px;text-align:right;">Non</div><div class="t" style="top:733.92px;font-size:17.1px;line-height:19.101px;color:#272b31;letter-spacing:0.459px;right:48.74px;text-align:right;">Non</div><svg class="b" style="left:893px;top:799.8px;" width="18" height="6" viewBox="0 0 18 6"><circle cx="3.3" cy="3" r="2.15" fill="#383838"/><circle cx="9.2" cy="3" r="2.15" fill="#383838"/><circle cx="15.100000000000001" cy="3" r="2.15" fill="#383838"/></svg><svg class="b" style="left:923px;top:793px;" width="21" height="21" viewBox="0 0 21 21"><path d="M9 2.8 H4.2 Q1.1 2.8 1.1 5.9 V15.9 Q1.1 19 4.2 19 H14.4 Q17.5 19 17.5 15.9 V11.2" fill="none" stroke="#383838" stroke-width="1.9" stroke-linecap="round"/><path d="M7.2 13.2 L16 4.4" stroke="#383838" stroke-width="4.2"/><path d="M5.9 14.8 L6.6 10.9 L10.1 14.2 Z" fill="#383838"/><path d="M18 2.6 L19.2 1.4" stroke="#383838" stroke-width="4" stroke-linecap="round"/></svg><div class="t" style="top:788.92px;font-size:17.1px;line-height:19.101px;color:#272b31;letter-spacing:-0.618px;right:1173.32px;text-align:right;">82</div><div class="t" style="top:788.92px;font-size:17.1px;line-height:19.101px;color:#272b31;letter-spacing:0.244px;left:1090px;">Responsable pôle métier conduite</div><div class="t" style="top:788.92px;font-size:17.1px;line-height:19.101px;color:#272b31;right:727.70px;text-align:right;">0</div><div class="t" style="top:788.92px;font-size:17.1px;line-height:19.101px;color:#272b31;letter-spacing:0.306px;right:597.19px;text-align:right;">Jours</div><div class="t" style="top:788.92px;font-size:17.1px;line-height:19.101px;color:#272b31;letter-spacing:0.459px;right:435.54px;text-align:right;">Non</div><div class="t" style="top:788.92px;font-size:17.1px;line-height:19.101px;color:#272b31;letter-spacing:0.459px;right:311.84px;text-align:right;">Non</div><div class="t" style="top:788.92px;font-size:17.1px;line-height:19.101px;color:#272b31;letter-spacing:0.459px;right:204.84px;text-align:right;">Non</div><div class="t" style="top:788.92px;font-size:17.1px;line-height:19.101px;color:#272b31;letter-spacing:0.459px;right:48.74px;text-align:right;">Non</div><svg class="b" style="left:893px;top:854.8px;" width="18" height="6" viewBox="0 0 18 6"><circle cx="3.3" cy="3" r="2.15" fill="#383838"/><circle cx="9.2" cy="3" r="2.15" fill="#383838"/><circle cx="15.100000000000001" cy="3" r="2.15" fill="#383838"/></svg><svg class="b" style="left:923px;top:848px;" width="21" height="21" viewBox="0 0 21 21"><path d="M9 2.8 H4.2 Q1.1 2.8 1.1 5.9 V15.9 Q1.1 19 4.2 19 H14.4 Q17.5 19 17.5 15.9 V11.2" fill="none" stroke="#383838" stroke-width="1.9" stroke-linecap="round"/><path d="M7.2 13.2 L16 4.4" stroke="#383838" stroke-width="4.2"/><path d="M5.9 14.8 L6.6 10.9 L10.1 14.2 Z" fill="#383838"/><path d="M18 2.6 L19.2 1.4" stroke="#383838" stroke-width="4" stroke-linecap="round"/></svg><div class="t" style="top:843.92px;font-size:17.1px;line-height:19.101px;color:#272b31;letter-spacing:-0.618px;right:1173.32px;text-align:right;">61</div><div class="t" style="top:843.92px;font-size:17.1px;line-height:19.101px;color:#272b31;letter-spacing:0.245px;left:1090px;">Responsable Pôle Conception et Adaptation</div><div class="t" style="top:843.92px;font-size:17.1px;line-height:19.101px;color:#272b31;letter-spacing:-0.412px;right:728.11px;text-align:right;">1094</div><div class="t" style="top:843.92px;font-size:17.1px;line-height:19.101px;color:#272b31;letter-spacing:0.306px;right:597.19px;text-align:right;">Jours</div><div class="t" style="top:843.92px;font-size:17.1px;line-height:19.101px;color:#272b31;letter-spacing:0.459px;right:435.54px;text-align:right;">Non</div><div class="t" style="top:843.92px;font-size:17.1px;line-height:19.101px;color:#272b31;letter-spacing:0.459px;right:311.84px;text-align:right;">Non</div><div class="t" style="top:843.92px;font-size:17.1px;line-height:19.101px;color:#272b31;letter-spacing:0.459px;right:204.84px;text-align:right;">Non</div><div class="t" style="top:843.92px;font-size:17.1px;line-height:19.101px;color:#272b31;letter-spacing:0.459px;right:48.74px;text-align:right;">Non</div><svg class="b" style="left:893px;top:909.8px;" width="18" height="6" viewBox="0 0 18 6"><circle cx="3.3" cy="3" r="2.15" fill="#383838"/><circle cx="9.2" cy="3" r="2.15" fill="#383838"/><circle cx="15.100000000000001" cy="3" r="2.15" fill="#383838"/></svg><svg class="b" style="left:923px;top:903px;" width="21" height="21" viewBox="0 0 21 21"><path d="M9 2.8 H4.2 Q1.1 2.8 1.1 5.9 V15.9 Q1.1 19 4.2 19 H14.4 Q17.5 19 17.5 15.9 V11.2" fill="none" stroke="#383838" stroke-width="1.9" stroke-linecap="round"/><path d="M7.2 13.2 L16 4.4" stroke="#383838" stroke-width="4.2"/><path d="M5.9 14.8 L6.6 10.9 L10.1 14.2 Z" fill="#383838"/><path d="M18 2.6 L19.2 1.4" stroke="#383838" stroke-width="4" stroke-linecap="round"/></svg><div class="t" style="top:898.92px;font-size:17.1px;line-height:19.101px;color:#272b31;letter-spacing:-0.618px;right:1173.32px;text-align:right;">71</div><div class="t" style="top:898.92px;font-size:17.1px;line-height:19.101px;color:#272b31;letter-spacing:0.245px;left:1090px;">Responsable Plan de transport</div><div class="t" style="top:898.92px;font-size:17.1px;line-height:19.101px;color:#272b31;letter-spacing:-0.412px;right:728.11px;text-align:right;">1094</div><div class="t" style="top:898.92px;font-size:17.1px;line-height:19.101px;color:#272b31;letter-spacing:0.306px;right:597.19px;text-align:right;">Jours</div><div class="t" style="top:898.92px;font-size:17.1px;line-height:19.101px;color:#272b31;letter-spacing:0.459px;right:435.54px;text-align:right;">Non</div><div class="t" style="top:898.92px;font-size:17.1px;line-height:19.101px;color:#272b31;letter-spacing:0.459px;right:311.84px;text-align:right;">Non</div><div class="t" style="top:898.92px;font-size:17.1px;line-height:19.101px;color:#272b31;letter-spacing:0.459px;right:204.84px;text-align:right;">Non</div><div class="t" style="top:898.92px;font-size:17.1px;line-height:19.101px;color:#272b31;letter-spacing:0.459px;right:48.74px;text-align:right;">Non</div><svg class="b" style="left:893px;top:964.8px;" width="18" height="6" viewBox="0 0 18 6"><circle cx="3.3" cy="3" r="2.15" fill="#383838"/><circle cx="9.2" cy="3" r="2.15" fill="#383838"/><circle cx="15.100000000000001" cy="3" r="2.15" fill="#383838"/></svg><svg class="b" style="left:923px;top:958px;" width="21" height="21" viewBox="0 0 21 21"><path d="M9 2.8 H4.2 Q1.1 2.8 1.1 5.9 V15.9 Q1.1 19 4.2 19 H14.4 Q17.5 19 17.5 15.9 V11.2" fill="none" stroke="#383838" stroke-width="1.9" stroke-linecap="round"/><path d="M7.2 13.2 L16 4.4" stroke="#383838" stroke-width="4.2"/><path d="M5.9 14.8 L6.6 10.9 L10.1 14.2 Z" fill="#383838"/><path d="M18 2.6 L19.2 1.4" stroke="#383838" stroke-width="4" stroke-linecap="round"/></svg><div class="t" style="top:953.92px;font-size:17.1px;line-height:19.101px;color:#272b31;letter-spacing:-0.618px;right:1173.32px;text-align:right;">30</div><div class="t" style="top:953.92px;font-size:17.1px;line-height:19.101px;color:#272b31;letter-spacing:0.230px;left:1090px;">Référent Traction (conduite)</div><div class="t" style="top:953.92px;font-size:17.1px;line-height:19.101px;color:#272b31;letter-spacing:-0.412px;right:728.11px;text-align:right;">1094</div><div class="t" style="top:953.92px;font-size:17.1px;line-height:19.101px;color:#272b31;letter-spacing:0.306px;right:597.19px;text-align:right;">Jours</div><div class="t" style="top:953.92px;font-size:17.1px;line-height:19.101px;color:#272b31;letter-spacing:0.459px;right:435.54px;text-align:right;">Non</div><div class="t" style="top:953.92px;font-size:17.1px;line-height:19.101px;color:#272b31;letter-spacing:0.459px;right:311.84px;text-align:right;">Non</div><div class="t" style="top:953.92px;font-size:17.1px;line-height:19.101px;color:#272b31;letter-spacing:0.459px;right:204.84px;text-align:right;">Non</div><div class="t" style="top:953.92px;font-size:17.1px;line-height:19.101px;color:#272b31;letter-spacing:0.459px;right:48.74px;text-align:right;">Non</div><svg class="b" style="left:893px;top:1019.8px;" width="18" height="6" viewBox="0 0 18 6"><circle cx="3.3" cy="3" r="2.15" fill="#383838"/><circle cx="9.2" cy="3" r="2.15" fill="#383838"/><circle cx="15.100000000000001" cy="3" r="2.15" fill="#383838"/></svg><svg class="b" style="left:923px;top:1013px;" width="21" height="21" viewBox="0 0 21 21"><path d="M9 2.8 H4.2 Q1.1 2.8 1.1 5.9 V15.9 Q1.1 19 4.2 19 H14.4 Q17.5 19 17.5 15.9 V11.2" fill="none" stroke="#383838" stroke-width="1.9" stroke-linecap="round"/><path d="M7.2 13.2 L16 4.4" stroke="#383838" stroke-width="4.2"/><path d="M5.9 14.8 L6.6 10.9 L10.1 14.2 Z" fill="#383838"/><path d="M18 2.6 L19.2 1.4" stroke="#383838" stroke-width="4" stroke-linecap="round"/></svg><div class="t" style="top:1008.92px;font-size:17.1px;line-height:19.101px;color:#272b31;letter-spacing:-0.618px;right:1173.32px;text-align:right;">79</div><div class="t" style="top:1008.92px;font-size:17.1px;line-height:19.101px;color:#272b31;letter-spacing:0.253px;left:1090px;">Référent Sol</div><div class="t" style="top:1008.92px;font-size:17.1px;line-height:19.101px;color:#272b31;letter-spacing:-0.412px;right:728.11px;text-align:right;">1094</div><div class="t" style="top:1008.92px;font-size:17.1px;line-height:19.101px;color:#272b31;letter-spacing:0.306px;right:597.19px;text-align:right;">Jours</div><div class="t" style="top:1008.92px;font-size:17.1px;line-height:19.101px;color:#272b31;letter-spacing:0.459px;right:435.54px;text-align:right;">Non</div><div class="t" style="top:1008.92px;font-size:17.1px;line-height:19.101px;color:#272b31;letter-spacing:0.459px;right:311.84px;text-align:right;">Non</div><div class="t" style="top:1008.92px;font-size:17.1px;line-height:19.101px;color:#272b31;letter-spacing:0.459px;right:204.84px;text-align:right;">Non</div><div class="t" style="top:1008.92px;font-size:17.1px;line-height:19.101px;color:#272b31;letter-spacing:0.459px;right:48.74px;text-align:right;">Non</div><svg class="b" style="left:893px;top:1074.8px;" width="18" height="6" viewBox="0 0 18 6"><circle cx="3.3" cy="3" r="2.15" fill="#383838"/><circle cx="9.2" cy="3" r="2.15" fill="#383838"/><circle cx="15.100000000000001" cy="3" r="2.15" fill="#383838"/></svg><svg class="b" style="left:923px;top:1068px;" width="21" height="21" viewBox="0 0 21 21"><path d="M9 2.8 H4.2 Q1.1 2.8 1.1 5.9 V15.9 Q1.1 19 4.2 19 H14.4 Q17.5 19 17.5 15.9 V11.2" fill="none" stroke="#383838" stroke-width="1.9" stroke-linecap="round"/><path d="M7.2 13.2 L16 4.4" stroke="#383838" stroke-width="4.2"/><path d="M5.9 14.8 L6.6 10.9 L10.1 14.2 Z" fill="#383838"/><path d="M18 2.6 L19.2 1.4" stroke="#383838" stroke-width="4" stroke-linecap="round"/></svg><div class="t" style="top:1063.92px;font-size:17.1px;line-height:19.101px;color:#272b31;letter-spacing:-0.618px;right:1173.32px;text-align:right;">33</div><div class="t" style="top:1063.92px;font-size:17.1px;line-height:19.101px;color:#272b31;letter-spacing:0.237px;left:1090px;">Référent Matériel Roulant</div><div class="t" style="top:1063.92px;font-size:17.1px;line-height:19.101px;color:#272b31;letter-spacing:-0.412px;right:728.11px;text-align:right;">1094</div><div class="t" style="top:1063.92px;font-size:17.1px;line-height:19.101px;color:#272b31;letter-spacing:0.306px;right:597.19px;text-align:right;">Jours</div><div class="t" style="top:1063.92px;font-size:17.1px;line-height:19.101px;color:#272b31;letter-spacing:0.459px;right:435.54px;text-align:right;">Non</div><div class="t" style="top:1063.92px;font-size:17.1px;line-height:19.101px;color:#272b31;letter-spacing:0.459px;right:311.84px;text-align:right;">Non</div><div class="t" style="top:1063.92px;font-size:17.1px;line-height:19.101px;color:#272b31;letter-spacing:0.459px;right:204.84px;text-align:right;">Non</div><div class="t" style="top:1063.92px;font-size:17.1px;line-height:19.101px;color:#272b31;letter-spacing:0.459px;right:48.74px;text-align:right;">Non</div><svg class="b" style="left:893px;top:1129.8px;" width="18" height="6" viewBox="0 0 18 6"><circle cx="3.3" cy="3" r="2.15" fill="#383838"/><circle cx="9.2" cy="3" r="2.15" fill="#383838"/><circle cx="15.100000000000001" cy="3" r="2.15" fill="#383838"/></svg><svg class="b" style="left:923px;top:1123px;" width="21" height="21" viewBox="0 0 21 21"><path d="M9 2.8 H4.2 Q1.1 2.8 1.1 5.9 V15.9 Q1.1 19 4.2 19 H14.4 Q17.5 19 17.5 15.9 V11.2" fill="none" stroke="#383838" stroke-width="1.9" stroke-linecap="round"/><path d="M7.2 13.2 L16 4.4" stroke="#383838" stroke-width="4.2"/><path d="M5.9 14.8 L6.6 10.9 L10.1 14.2 Z" fill="#383838"/><path d="M18 2.6 L19.2 1.4" stroke="#383838" stroke-width="4" stroke-linecap="round"/></svg><div class="t" style="top:1118.92px;font-size:17.1px;line-height:19.101px;color:#272b31;letter-spacing:-0.464px;right:1173.16px;text-align:right;">102</div><div class="t" style="top:1118.92px;font-size:17.1px;line-height:19.101px;color:#272b31;letter-spacing:0.230px;left:1090px;">Référent flotte engin moteur</div><div class="t" style="top:1118.92px;font-size:17.1px;line-height:19.101px;color:#272b31;letter-spacing:-0.412px;right:728.11px;text-align:right;">1094</div><div class="t" style="top:1118.92px;font-size:17.1px;line-height:19.101px;color:#272b31;letter-spacing:0.306px;right:597.19px;text-align:right;">Jours</div><div class="t" style="top:1118.92px;font-size:17.1px;line-height:19.101px;color:#272b31;letter-spacing:0.459px;right:435.54px;text-align:right;">Non</div><div class="t" style="top:1118.92px;font-size:17.1px;line-height:19.101px;color:#272b31;letter-spacing:0.459px;right:311.84px;text-align:right;">Non</div><div class="t" style="top:1118.92px;font-size:17.1px;line-height:19.101px;color:#272b31;letter-spacing:0.459px;right:204.84px;text-align:right;">Non</div><div class="t" style="top:1118.92px;font-size:17.1px;line-height:19.101px;color:#272b31;letter-spacing:0.459px;right:48.74px;text-align:right;">Non</div><svg class="b" style="left:893px;top:1184.8px;" width="18" height="6" viewBox="0 0 18 6"><circle cx="3.3" cy="3" r="2.15" fill="#383838"/><circle cx="9.2" cy="3" r="2.15" fill="#383838"/><circle cx="15.100000000000001" cy="3" r="2.15" fill="#383838"/></svg><svg class="b" style="left:923px;top:1178px;" width="21" height="21" viewBox="0 0 21 21"><path d="M9 2.8 H4.2 Q1.1 2.8 1.1 5.9 V15.9 Q1.1 19 4.2 19 H14.4 Q17.5 19 17.5 15.9 V11.2" fill="none" stroke="#383838" stroke-width="1.9" stroke-linecap="round"/><path d="M7.2 13.2 L16 4.4" stroke="#383838" stroke-width="4.2"/><path d="M5.9 14.8 L6.6 10.9 L10.1 14.2 Z" fill="#383838"/><path d="M18 2.6 L19.2 1.4" stroke="#383838" stroke-width="4" stroke-linecap="round"/></svg><div class="t" style="top:1173.92px;font-size:17.1px;line-height:19.101px;color:#272b31;letter-spacing:-0.618px;right:1173.32px;text-align:right;">78</div><div class="t" style="top:1173.92px;font-size:17.1px;line-height:19.101px;color:#272b31;letter-spacing:0.251px;left:1090px;">Référent matières dangeureuses</div><div class="t" style="top:1173.92px;font-size:17.1px;line-height:19.101px;color:#272b31;letter-spacing:-0.412px;right:728.11px;text-align:right;">1094</div><div class="t" style="top:1173.92px;font-size:17.1px;line-height:19.101px;color:#272b31;letter-spacing:0.306px;right:597.19px;text-align:right;">Jours</div><div class="t" style="top:1173.92px;font-size:17.1px;line-height:19.101px;color:#272b31;letter-spacing:0.459px;right:435.54px;text-align:right;">Non</div><div class="t" style="top:1173.92px;font-size:17.1px;line-height:19.101px;color:#272b31;letter-spacing:0.459px;right:311.84px;text-align:right;">Non</div><div class="t" style="top:1173.92px;font-size:17.1px;line-height:19.101px;color:#272b31;letter-spacing:0.459px;right:204.84px;text-align:right;">Non</div><div class="t" style="top:1173.92px;font-size:17.1px;line-height:19.101px;color:#272b31;letter-spacing:0.459px;right:48.74px;text-align:right;">Non</div><svg class="b" style="left:893px;top:1239.8px;" width="18" height="6" viewBox="0 0 18 6"><circle cx="3.3" cy="3" r="2.15" fill="#383838"/><circle cx="9.2" cy="3" r="2.15" fill="#383838"/><circle cx="15.100000000000001" cy="3" r="2.15" fill="#383838"/></svg><svg class="b" style="left:923px;top:1233px;" width="21" height="21" viewBox="0 0 21 21"><path d="M9 2.8 H4.2 Q1.1 2.8 1.1 5.9 V15.9 Q1.1 19 4.2 19 H14.4 Q17.5 19 17.5 15.9 V11.2" fill="none" stroke="#383838" stroke-width="1.9" stroke-linecap="round"/><path d="M7.2 13.2 L16 4.4" stroke="#383838" stroke-width="4.2"/><path d="M5.9 14.8 L6.6 10.9 L10.1 14.2 Z" fill="#383838"/><path d="M18 2.6 L19.2 1.4" stroke="#383838" stroke-width="4" stroke-linecap="round"/></svg><div class="t" style="top:1228.92px;font-size:17.1px;line-height:19.101px;color:#272b31;letter-spacing:-0.618px;right:1173.32px;text-align:right;">52</div><div class="t" style="top:1228.92px;font-size:17.1px;line-height:19.101px;color:#272b31;letter-spacing:0.232px;left:1090px;">Planificateurs - concepteurs (CAP)</div><div class="t" style="top:1228.92px;font-size:17.1px;line-height:19.101px;color:#272b31;letter-spacing:-0.412px;right:728.11px;text-align:right;">1094</div><div class="t" style="top:1228.92px;font-size:17.1px;line-height:19.101px;color:#272b31;letter-spacing:0.306px;right:597.19px;text-align:right;">Jours</div><div class="t" style="top:1228.92px;font-size:17.1px;line-height:19.101px;color:#272b31;letter-spacing:0.459px;right:435.54px;text-align:right;">Non</div><div class="t" style="top:1228.92px;font-size:17.1px;line-height:19.101px;color:#272b31;letter-spacing:0.459px;right:311.84px;text-align:right;">Non</div><div class="t" style="top:1228.92px;font-size:17.1px;line-height:19.101px;color:#272b31;letter-spacing:0.459px;right:204.84px;text-align:right;">Non</div><div class="t" style="top:1228.92px;font-size:17.1px;line-height:19.101px;color:#272b31;letter-spacing:0.459px;right:48.74px;text-align:right;">Non</div><svg class="b" style="left:893px;top:1294.8px;" width="18" height="6" viewBox="0 0 18 6"><circle cx="3.3" cy="3" r="2.15" fill="#383838"/><circle cx="9.2" cy="3" r="2.15" fill="#383838"/><circle cx="15.100000000000001" cy="3" r="2.15" fill="#383838"/></svg><svg class="b" style="left:923px;top:1288px;" width="21" height="21" viewBox="0 0 21 21"><path d="M9 2.8 H4.2 Q1.1 2.8 1.1 5.9 V15.9 Q1.1 19 4.2 19 H14.4 Q17.5 19 17.5 15.9 V11.2" fill="none" stroke="#383838" stroke-width="1.9" stroke-linecap="round"/><path d="M7.2 13.2 L16 4.4" stroke="#383838" stroke-width="4.2"/><path d="M5.9 14.8 L6.6 10.9 L10.1 14.2 Z" fill="#383838"/><path d="M18 2.6 L19.2 1.4" stroke="#383838" stroke-width="4" stroke-linecap="round"/></svg><div class="t" style="top:1283.92px;font-size:17.1px;line-height:19.101px;color:#272b31;letter-spacing:-0.618px;right:1173.32px;text-align:right;">23</div><div class="t" style="top:1283.92px;font-size:17.1px;line-height:19.101px;color:#272b31;letter-spacing:0.278px;left:1090px;">Moniteur</div><div class="t" style="top:1283.92px;font-size:17.1px;line-height:19.101px;color:#272b31;letter-spacing:-0.412px;right:728.11px;text-align:right;">1094</div><div class="t" style="top:1283.92px;font-size:17.1px;line-height:19.101px;color:#272b31;letter-spacing:0.306px;right:597.19px;text-align:right;">Jours</div><div class="t" style="top:1283.92px;font-size:17.1px;line-height:19.101px;color:#272b31;letter-spacing:0.459px;right:435.54px;text-align:right;">Non</div><div class="t" style="top:1283.92px;font-size:17.1px;line-height:19.101px;color:#272b31;letter-spacing:0.459px;right:311.84px;text-align:right;">Non</div><div class="t" style="top:1283.92px;font-size:17.1px;line-height:19.101px;color:#272b31;letter-spacing:0.459px;right:204.84px;text-align:right;">Non</div><div class="t" style="top:1283.92px;font-size:17.1px;line-height:19.101px;color:#272b31;letter-spacing:0.459px;right:48.74px;text-align:right;">Non</div><svg class="b" style="left:893px;top:1349.8px;" width="18" height="6" viewBox="0 0 18 6"><circle cx="3.3" cy="3" r="2.15" fill="#383838"/><circle cx="9.2" cy="3" r="2.15" fill="#383838"/><circle cx="15.100000000000001" cy="3" r="2.15" fill="#383838"/></svg><svg class="b" style="left:923px;top:1343px;" width="21" height="21" viewBox="0 0 21 21"><path d="M9 2.8 H4.2 Q1.1 2.8 1.1 5.9 V15.9 Q1.1 19 4.2 19 H14.4 Q17.5 19 17.5 15.9 V11.2" fill="none" stroke="#383838" stroke-width="1.9" stroke-linecap="round"/><path d="M7.2 13.2 L16 4.4" stroke="#383838" stroke-width="4.2"/><path d="M5.9 14.8 L6.6 10.9 L10.1 14.2 Z" fill="#383838"/><path d="M18 2.6 L19.2 1.4" stroke="#383838" stroke-width="4" stroke-linecap="round"/></svg><div class="t" style="top:1338.92px;font-size:17.1px;line-height:19.101px;color:#272b31;letter-spacing:-0.464px;right:1173.16px;text-align:right;">103</div><div class="b" style="left:1089px;top:1336px;width:345px;height:35px;background:#d3d3d3;"></div><div class="t" style="top:1342.92px;font-size:17.1px;line-height:19.101px;color:#a8281c;font-style:italic;letter-spacing:0.266px;left:1094px;">Machiniste</div><div class="t" style="top:1338.92px;font-size:17.1px;line-height:19.101px;color:#272b31;letter-spacing:-0.412px;right:728.11px;text-align:right;">1094</div><div class="t" style="top:1338.92px;font-size:17.1px;line-height:19.101px;color:#272b31;letter-spacing:0.306px;right:597.19px;text-align:right;">Jours</div><div class="t" style="top:1338.92px;font-size:17.1px;line-height:19.101px;color:#272b31;letter-spacing:0.459px;right:435.54px;text-align:right;">Non</div><div class="t" style="top:1338.92px;font-size:17.1px;line-height:19.101px;color:#272b31;letter-spacing:0.389px;right:311.91px;text-align:right;">Oui</div><div class="t" style="top:1338.92px;font-size:17.1px;line-height:19.101px;color:#272b31;letter-spacing:0.459px;right:204.84px;text-align:right;">Non</div><div class="t" style="top:1338.92px;font-size:17.1px;line-height:19.101px;color:#272b31;letter-spacing:0.389px;right:48.81px;text-align:right;">Oui</div><svg class="b" style="left:893px;top:1404.8px;" width="18" height="6" viewBox="0 0 18 6"><circle cx="3.3" cy="3" r="2.15" fill="#383838"/><circle cx="9.2" cy="3" r="2.15" fill="#383838"/><circle cx="15.100000000000001" cy="3" r="2.15" fill="#383838"/></svg><svg class="b" style="left:923px;top:1398px;" width="21" height="21" viewBox="0 0 21 21"><path d="M9 2.8 H4.2 Q1.1 2.8 1.1 5.9 V15.9 Q1.1 19 4.2 19 H14.4 Q17.5 19 17.5 15.9 V11.2" fill="none" stroke="#383838" stroke-width="1.9" stroke-linecap="round"/><path d="M7.2 13.2 L16 4.4" stroke="#383838" stroke-width="4.2"/><path d="M5.9 14.8 L6.6 10.9 L10.1 14.2 Z" fill="#383838"/><path d="M18 2.6 L19.2 1.4" stroke="#383838" stroke-width="4" stroke-linecap="round"/></svg><div class="t" style="top:1393.92px;font-size:17.1px;line-height:19.101px;color:#272b31;letter-spacing:-0.618px;right:1173.32px;text-align:right;">55</div><div class="t" style="top:1393.92px;font-size:17.1px;line-height:19.101px;color:#272b31;letter-spacing:0.262px;left:1090px;">Gestionnaire PC</div><div class="t" style="top:1393.92px;font-size:17.1px;line-height:19.101px;color:#272b31;letter-spacing:-0.412px;right:728.11px;text-align:right;">1094</div><div class="t" style="top:1393.92px;font-size:17.1px;line-height:19.101px;color:#272b31;letter-spacing:0.306px;right:597.19px;text-align:right;">Jours</div><div class="t" style="top:1393.92px;font-size:17.1px;line-height:19.101px;color:#272b31;letter-spacing:0.459px;right:435.54px;text-align:right;">Non</div><div class="t" style="top:1393.92px;font-size:17.1px;line-height:19.101px;color:#272b31;letter-spacing:0.459px;right:311.84px;text-align:right;">Non</div><div class="t" style="top:1393.92px;font-size:17.1px;line-height:19.101px;color:#272b31;letter-spacing:0.459px;right:204.84px;text-align:right;">Non</div><div class="t" style="top:1393.92px;font-size:17.1px;line-height:19.101px;color:#272b31;letter-spacing:0.389px;right:48.81px;text-align:right;">Oui</div><svg class="b" style="left:893px;top:1459.8px;" width="18" height="6" viewBox="0 0 18 6"><circle cx="3.3" cy="3" r="2.15" fill="#383838"/><circle cx="9.2" cy="3" r="2.15" fill="#383838"/><circle cx="15.100000000000001" cy="3" r="2.15" fill="#383838"/></svg><svg class="b" style="left:923px;top:1453px;" width="21" height="21" viewBox="0 0 21 21"><path d="M9 2.8 H4.2 Q1.1 2.8 1.1 5.9 V15.9 Q1.1 19 4.2 19 H14.4 Q17.5 19 17.5 15.9 V11.2" fill="none" stroke="#383838" stroke-width="1.9" stroke-linecap="round"/><path d="M7.2 13.2 L16 4.4" stroke="#383838" stroke-width="4.2"/><path d="M5.9 14.8 L6.6 10.9 L10.1 14.2 Z" fill="#383838"/><path d="M18 2.6 L19.2 1.4" stroke="#383838" stroke-width="4" stroke-linecap="round"/></svg><div class="t" style="top:1448.92px;font-size:17.1px;line-height:19.101px;color:#272b31;letter-spacing:-0.618px;right:1173.32px;text-align:right;">47</div><div class="t" style="top:1448.92px;font-size:17.1px;line-height:19.101px;color:#272b31;letter-spacing:0.236px;left:1090px;">Gestionnaire de flotte wagons</div><div class="t" style="top:1448.92px;font-size:17.1px;line-height:19.101px;color:#272b31;letter-spacing:-0.412px;right:728.11px;text-align:right;">1094</div><div class="t" style="top:1448.92px;font-size:17.1px;line-height:19.101px;color:#272b31;letter-spacing:0.306px;right:597.19px;text-align:right;">Jours</div><div class="t" style="top:1448.92px;font-size:17.1px;line-height:19.101px;color:#272b31;letter-spacing:0.459px;right:435.54px;text-align:right;">Non</div><div class="t" style="top:1448.92px;font-size:17.1px;line-height:19.101px;color:#272b31;letter-spacing:0.459px;right:311.84px;text-align:right;">Non</div><div class="t" style="top:1448.92px;font-size:17.1px;line-height:19.101px;color:#272b31;letter-spacing:0.459px;right:204.84px;text-align:right;">Non</div><div class="t" style="top:1448.92px;font-size:17.1px;line-height:19.101px;color:#272b31;letter-spacing:0.459px;right:48.74px;text-align:right;">Non</div><svg class="b" style="left:893px;top:1514.8px;" width="18" height="6" viewBox="0 0 18 6"><circle cx="3.3" cy="3" r="2.15" fill="#383838"/><circle cx="9.2" cy="3" r="2.15" fill="#383838"/><circle cx="15.100000000000001" cy="3" r="2.15" fill="#383838"/></svg><svg class="b" style="left:923px;top:1508px;" width="21" height="21" viewBox="0 0 21 21"><path d="M9 2.8 H4.2 Q1.1 2.8 1.1 5.9 V15.9 Q1.1 19 4.2 19 H14.4 Q17.5 19 17.5 15.9 V11.2" fill="none" stroke="#383838" stroke-width="1.9" stroke-linecap="round"/><path d="M7.2 13.2 L16 4.4" stroke="#383838" stroke-width="4.2"/><path d="M5.9 14.8 L6.6 10.9 L10.1 14.2 Z" fill="#383838"/><path d="M18 2.6 L19.2 1.4" stroke="#383838" stroke-width="4" stroke-linecap="round"/></svg><div class="t" style="top:1503.92px;font-size:17.1px;line-height:19.101px;color:#272b31;letter-spacing:-0.618px;right:1173.32px;text-align:right;">56</div><div class="t" style="top:1503.92px;font-size:17.1px;line-height:19.101px;color:#272b31;letter-spacing:0.243px;left:1090px;">Gestionnaire de flotte LOCO</div><div class="t" style="top:1503.92px;font-size:17.1px;line-height:19.101px;color:#272b31;letter-spacing:-0.412px;right:728.11px;text-align:right;">1094</div><div class="t" style="top:1503.92px;font-size:17.1px;line-height:19.101px;color:#272b31;letter-spacing:0.306px;right:597.19px;text-align:right;">Jours</div><div class="t" style="top:1503.92px;font-size:17.1px;line-height:19.101px;color:#272b31;letter-spacing:0.459px;right:435.54px;text-align:right;">Non</div><div class="t" style="top:1503.92px;font-size:17.1px;line-height:19.101px;color:#272b31;letter-spacing:0.459px;right:311.84px;text-align:right;">Non</div><div class="t" style="top:1503.92px;font-size:17.1px;line-height:19.101px;color:#272b31;letter-spacing:0.459px;right:204.84px;text-align:right;">Non</div><div class="t" style="top:1503.92px;font-size:17.1px;line-height:19.101px;color:#272b31;letter-spacing:0.459px;right:48.74px;text-align:right;">Non</div><svg class="b" style="left:893px;top:1569.8px;" width="18" height="6" viewBox="0 0 18 6"><circle cx="3.3" cy="3" r="2.15" fill="#383838"/><circle cx="9.2" cy="3" r="2.15" fill="#383838"/><circle cx="15.100000000000001" cy="3" r="2.15" fill="#383838"/></svg><svg class="b" style="left:923px;top:1563px;" width="21" height="21" viewBox="0 0 21 21"><path d="M9 2.8 H4.2 Q1.1 2.8 1.1 5.9 V15.9 Q1.1 19 4.2 19 H14.4 Q17.5 19 17.5 15.9 V11.2" fill="none" stroke="#383838" stroke-width="1.9" stroke-linecap="round"/><path d="M7.2 13.2 L16 4.4" stroke="#383838" stroke-width="4.2"/><path d="M5.9 14.8 L6.6 10.9 L10.1 14.2 Z" fill="#383838"/><path d="M18 2.6 L19.2 1.4" stroke="#383838" stroke-width="4" stroke-linecap="round"/></svg><div class="t" style="top:1558.92px;font-size:17.1px;line-height:19.101px;color:#272b31;letter-spacing:-0.618px;right:1173.32px;text-align:right;">72</div><div class="t" style="top:1558.92px;font-size:17.1px;line-height:19.101px;color:#272b31;letter-spacing:0.241px;left:1090px;">Formateur Int. Ent. SOL</div><div class="t" style="top:1558.92px;font-size:17.1px;line-height:19.101px;color:#272b31;letter-spacing:-0.412px;right:728.11px;text-align:right;">1094</div><div class="t" style="top:1558.92px;font-size:17.1px;line-height:19.101px;color:#272b31;letter-spacing:0.306px;right:597.19px;text-align:right;">Jours</div><div class="t" style="top:1558.92px;font-size:17.1px;line-height:19.101px;color:#272b31;letter-spacing:0.459px;right:435.54px;text-align:right;">Non</div><div class="t" style="top:1558.92px;font-size:17.1px;line-height:19.101px;color:#272b31;letter-spacing:0.459px;right:311.84px;text-align:right;">Non</div><div class="t" style="top:1558.92px;font-size:17.1px;line-height:19.101px;color:#272b31;letter-spacing:0.459px;right:204.84px;text-align:right;">Non</div><div class="t" style="top:1558.92px;font-size:17.1px;line-height:19.101px;color:#272b31;letter-spacing:0.459px;right:48.74px;text-align:right;">Non</div><svg class="b" style="left:893px;top:1624.8px;" width="18" height="6" viewBox="0 0 18 6"><circle cx="3.3" cy="3" r="2.15" fill="#383838"/><circle cx="9.2" cy="3" r="2.15" fill="#383838"/><circle cx="15.100000000000001" cy="3" r="2.15" fill="#383838"/></svg><svg class="b" style="left:923px;top:1618px;" width="21" height="21" viewBox="0 0 21 21"><path d="M9 2.8 H4.2 Q1.1 2.8 1.1 5.9 V15.9 Q1.1 19 4.2 19 H14.4 Q17.5 19 17.5 15.9 V11.2" fill="none" stroke="#383838" stroke-width="1.9" stroke-linecap="round"/><path d="M7.2 13.2 L16 4.4" stroke="#383838" stroke-width="4.2"/><path d="M5.9 14.8 L6.6 10.9 L10.1 14.2 Z" fill="#383838"/><path d="M18 2.6 L19.2 1.4" stroke="#383838" stroke-width="4" stroke-linecap="round"/></svg><div class="t" style="top:1613.92px;font-size:17.1px;line-height:19.101px;color:#272b31;letter-spacing:-0.618px;right:1173.32px;text-align:right;">51</div><div class="t" style="top:1613.92px;font-size:17.1px;line-height:19.101px;color:#272b31;letter-spacing:0.234px;left:1090px;">Expert métier sol</div><div class="t" style="top:1613.92px;font-size:17.1px;line-height:19.101px;color:#272b31;letter-spacing:-0.412px;right:728.11px;text-align:right;">1094</div><div class="t" style="top:1613.92px;font-size:17.1px;line-height:19.101px;color:#272b31;letter-spacing:0.306px;right:597.19px;text-align:right;">Jours</div><div class="t" style="top:1613.92px;font-size:17.1px;line-height:19.101px;color:#272b31;letter-spacing:0.459px;right:435.54px;text-align:right;">Non</div><div class="t" style="top:1613.92px;font-size:17.1px;line-height:19.101px;color:#272b31;letter-spacing:0.459px;right:311.84px;text-align:right;">Non</div><div class="t" style="top:1613.92px;font-size:17.1px;line-height:19.101px;color:#272b31;letter-spacing:0.459px;right:204.84px;text-align:right;">Non</div><div class="t" style="top:1613.92px;font-size:17.1px;line-height:19.101px;color:#272b31;letter-spacing:0.459px;right:48.74px;text-align:right;">Non</div></body></html>
